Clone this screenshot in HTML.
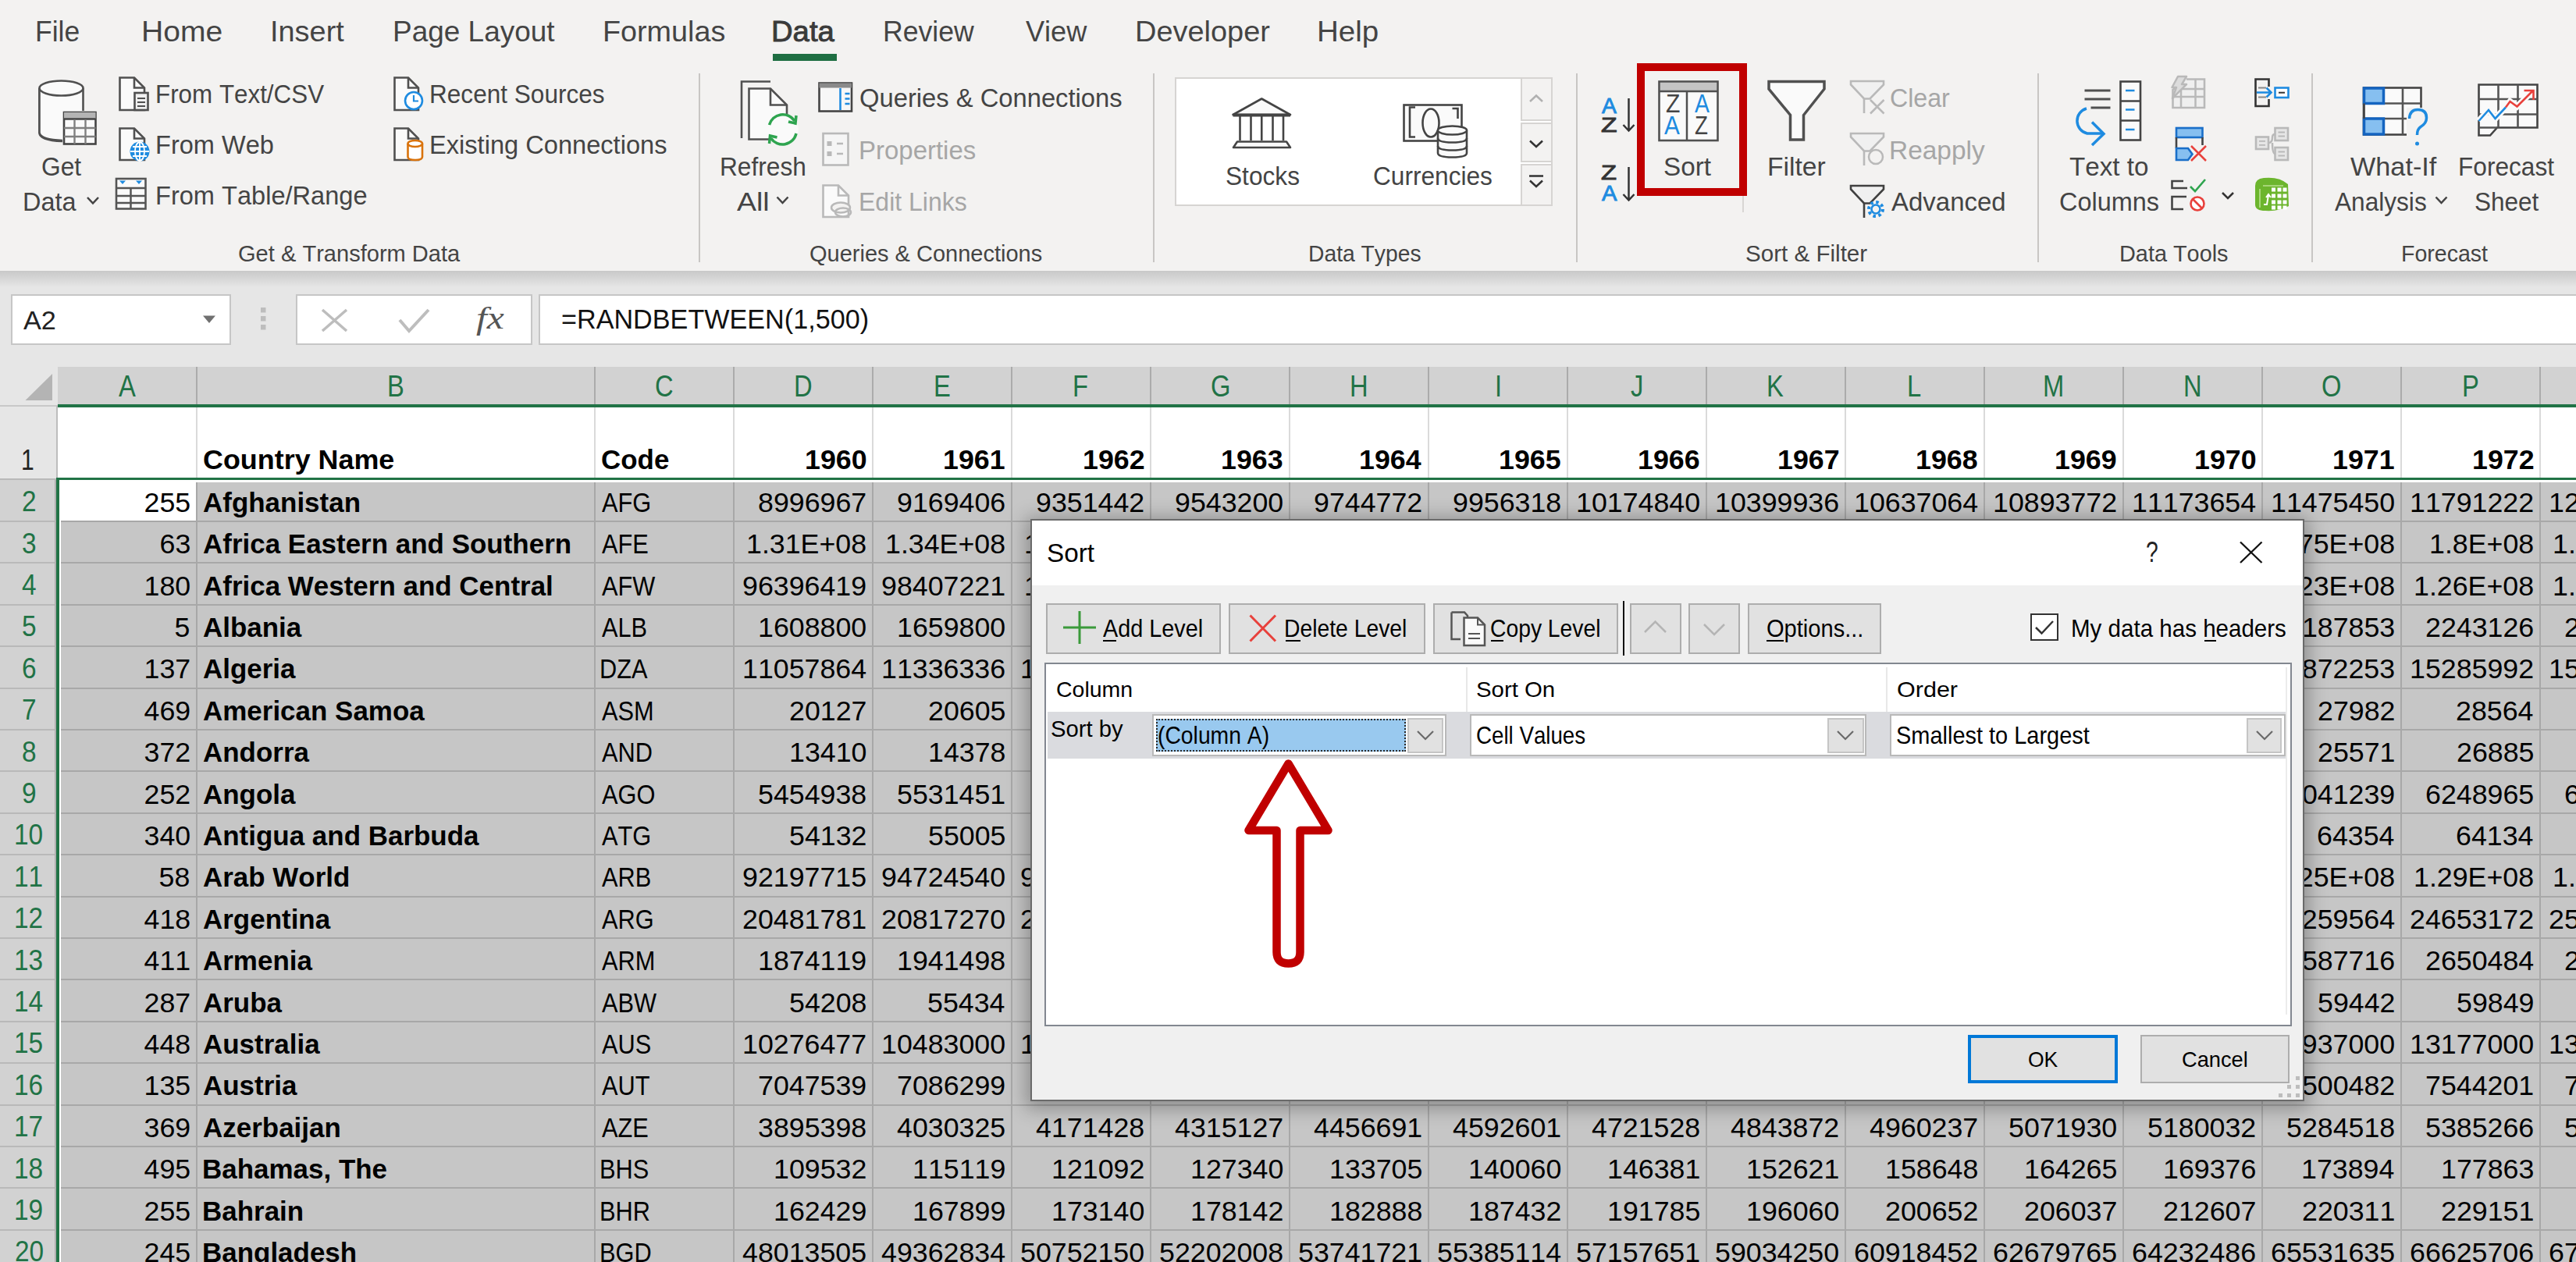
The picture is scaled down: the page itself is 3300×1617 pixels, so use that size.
<!DOCTYPE html>
<html><head><meta charset="utf-8"><style>
html,body{margin:0;padding:0}
body{width:3300px;height:1617px;overflow:hidden;position:relative;background:#fff;font-family:"Liberation Sans",sans-serif;font-kerning:none}
.a{position:absolute}
.t{position:absolute;white-space:pre;transform-origin:0 0}
u{text-decoration:underline;text-underline-offset:3px;text-decoration-thickness:2px}
svg{position:absolute;left:0;top:0}
</style></head><body>
<div class="a" style="left:0.00px;top:0.00px;width:3300.00px;height:347.00px;background:#f3f2f1;"></div>
<div class="a" style="left:0.00px;top:347.00px;width:3300.00px;height:123.00px;background:#e6e6e6;"></div>
<div class="a" style="left:0.00px;top:347.00px;width:3300.00px;height:21.00px;background:linear-gradient(rgba(0,0,0,0.13),rgba(0,0,0,0));"></div>
<div class="a" style="left:14.00px;top:377.00px;width:282.00px;height:65.00px;background:#fff;box-sizing:border-box;border:2px solid #c6c6c6;"></div>
<div class="t" style="left:30.00px;top:393.69px;font-size:33.430px;line-height:33.430px;color:#222;transform:scaleX(1.0256);">A2</div>
<div class="a" style="left:379.00px;top:377.00px;width:303.00px;height:65.00px;background:#fff;box-sizing:border-box;border:2px solid #c6c6c6;"></div>
<div class="a" style="left:690.00px;top:377.00px;width:2620.00px;height:65.00px;background:#fff;box-sizing:border-box;border:2px solid #c6c6c6;"></div>
<svg width="3300" height="470" style="left:0;top:0"><path d="M260 404.5 L276 404.5 L268 414 Z" fill="#707070"/><rect x="334" y="394" width="6.5" height="6.5" fill="#bdbdbd"/><rect x="334" y="405" width="6.5" height="6.5" fill="#bdbdbd"/><rect x="334" y="416" width="6.5" height="6.5" fill="#bdbdbd"/><path d="M413 397 L444 424 M444 397 L413 424" stroke="#bdbdbd" stroke-width="3.5" fill="none"/><path d="M512 410 L524 424 L549 397" stroke="#bdbdbd" stroke-width="4" fill="none"/></svg>
<div class="t" style="left:610.00px;top:388.13px;font-size:40.000px;line-height:40.000px;color:#555;font-family:'Liberation Serif', serif;font-style:italic;transform:scaleX(1.2414);">fx</div>
<div class="t" style="left:719.04px;top:392.46px;font-size:34.884px;line-height:34.884px;color:#111;transform:scaleX(0.9799);">=RANDBETWEEN(1,500)</div>
<div class="a" style="left:0.00px;top:470.00px;width:74.00px;height:50.00px;background:#e6e6e6;"></div>
<svg width="80" height="60" style="left:0;top:470px"><path d="M67 9 L67 43 L32.5 43 Z" fill="#b4b4b4"/></svg>
<div class="a" style="left:74.00px;top:470.00px;width:3226.00px;height:48.00px;background:#d2d2d2;"></div>
<div class="a" style="left:251.00px;top:470.00px;width:2.00px;height:48.00px;background:#ababab;"></div>
<div class="a" style="left:761.00px;top:470.00px;width:2.00px;height:48.00px;background:#ababab;"></div>
<div class="a" style="left:939.00px;top:470.00px;width:2.00px;height:48.00px;background:#ababab;"></div>
<div class="a" style="left:1117.00px;top:470.00px;width:2.00px;height:48.00px;background:#ababab;"></div>
<div class="a" style="left:1295.00px;top:470.00px;width:2.00px;height:48.00px;background:#ababab;"></div>
<div class="a" style="left:1473.00px;top:470.00px;width:2.00px;height:48.00px;background:#ababab;"></div>
<div class="a" style="left:1651.00px;top:470.00px;width:2.00px;height:48.00px;background:#ababab;"></div>
<div class="a" style="left:1829.00px;top:470.00px;width:2.00px;height:48.00px;background:#ababab;"></div>
<div class="a" style="left:2007.00px;top:470.00px;width:2.00px;height:48.00px;background:#ababab;"></div>
<div class="a" style="left:2185.00px;top:470.00px;width:2.00px;height:48.00px;background:#ababab;"></div>
<div class="a" style="left:2363.00px;top:470.00px;width:2.00px;height:48.00px;background:#ababab;"></div>
<div class="a" style="left:2541.00px;top:470.00px;width:2.00px;height:48.00px;background:#ababab;"></div>
<div class="a" style="left:2719.00px;top:470.00px;width:2.00px;height:48.00px;background:#ababab;"></div>
<div class="a" style="left:2897.00px;top:470.00px;width:2.00px;height:48.00px;background:#ababab;"></div>
<div class="a" style="left:3075.00px;top:470.00px;width:2.00px;height:48.00px;background:#ababab;"></div>
<div class="a" style="left:3253.00px;top:470.00px;width:2.00px;height:48.00px;background:#ababab;"></div>
<div class="a" style="left:3431.00px;top:470.00px;width:2.00px;height:48.00px;background:#ababab;"></div>
<div class="a" style="left:0.00px;top:520.00px;width:74.00px;height:92.00px;background:#e6e6e6;"></div>
<div class="a" style="left:74.00px;top:520.00px;width:3226.00px;height:92.00px;background:#fff;"></div>
<div class="a" style="left:0.00px;top:519.00px;width:74.00px;height:2.00px;background:#c8c8c8;"></div>
<div class="a" style="left:72.00px;top:520.00px;width:2.00px;height:92.00px;background:#bdbdbd;"></div>
<div class="a" style="left:251.00px;top:521.00px;width:2.00px;height:91.00px;background:#dadada;"></div>
<div class="a" style="left:761.00px;top:521.00px;width:2.00px;height:91.00px;background:#dadada;"></div>
<div class="a" style="left:939.00px;top:521.00px;width:2.00px;height:91.00px;background:#dadada;"></div>
<div class="a" style="left:1117.00px;top:521.00px;width:2.00px;height:91.00px;background:#dadada;"></div>
<div class="a" style="left:1295.00px;top:521.00px;width:2.00px;height:91.00px;background:#dadada;"></div>
<div class="a" style="left:1473.00px;top:521.00px;width:2.00px;height:91.00px;background:#dadada;"></div>
<div class="a" style="left:1651.00px;top:521.00px;width:2.00px;height:91.00px;background:#dadada;"></div>
<div class="a" style="left:1829.00px;top:521.00px;width:2.00px;height:91.00px;background:#dadada;"></div>
<div class="a" style="left:2007.00px;top:521.00px;width:2.00px;height:91.00px;background:#dadada;"></div>
<div class="a" style="left:2185.00px;top:521.00px;width:2.00px;height:91.00px;background:#dadada;"></div>
<div class="a" style="left:2363.00px;top:521.00px;width:2.00px;height:91.00px;background:#dadada;"></div>
<div class="a" style="left:2541.00px;top:521.00px;width:2.00px;height:91.00px;background:#dadada;"></div>
<div class="a" style="left:2719.00px;top:521.00px;width:2.00px;height:91.00px;background:#dadada;"></div>
<div class="a" style="left:2897.00px;top:521.00px;width:2.00px;height:91.00px;background:#dadada;"></div>
<div class="a" style="left:3075.00px;top:521.00px;width:2.00px;height:91.00px;background:#dadada;"></div>
<div class="a" style="left:3253.00px;top:521.00px;width:2.00px;height:91.00px;background:#dadada;"></div>
<div class="a" style="left:3431.00px;top:521.00px;width:2.00px;height:91.00px;background:#dadada;"></div>
<div class="a" style="left:0.00px;top:612.00px;width:72.00px;height:1.00px;background:#e6e6e6;"></div>
<div class="a" style="left:0.00px;top:613.00px;width:72.00px;height:2.00px;background:#b9b9b9;"></div>
<div class="a" style="left:0.00px;top:615.00px;width:72.00px;height:2685.00px;background:#d2d2d2;"></div>
<div class="a" style="left:0.00px;top:667.00px;width:72.00px;height:2.00px;background:#b9b9b9;"></div>
<div class="a" style="left:0.00px;top:720.40px;width:72.00px;height:2.00px;background:#b9b9b9;"></div>
<div class="a" style="left:0.00px;top:773.80px;width:72.00px;height:2.00px;background:#b9b9b9;"></div>
<div class="a" style="left:0.00px;top:827.20px;width:72.00px;height:2.00px;background:#b9b9b9;"></div>
<div class="a" style="left:0.00px;top:880.60px;width:72.00px;height:2.00px;background:#b9b9b9;"></div>
<div class="a" style="left:0.00px;top:934.00px;width:72.00px;height:2.00px;background:#b9b9b9;"></div>
<div class="a" style="left:0.00px;top:987.40px;width:72.00px;height:2.00px;background:#b9b9b9;"></div>
<div class="a" style="left:0.00px;top:1040.80px;width:72.00px;height:2.00px;background:#b9b9b9;"></div>
<div class="a" style="left:0.00px;top:1094.20px;width:72.00px;height:2.00px;background:#b9b9b9;"></div>
<div class="a" style="left:0.00px;top:1147.60px;width:72.00px;height:2.00px;background:#b9b9b9;"></div>
<div class="a" style="left:0.00px;top:1201.00px;width:72.00px;height:2.00px;background:#b9b9b9;"></div>
<div class="a" style="left:0.00px;top:1254.40px;width:72.00px;height:2.00px;background:#b9b9b9;"></div>
<div class="a" style="left:0.00px;top:1307.80px;width:72.00px;height:2.00px;background:#b9b9b9;"></div>
<div class="a" style="left:0.00px;top:1361.20px;width:72.00px;height:2.00px;background:#b9b9b9;"></div>
<div class="a" style="left:0.00px;top:1414.60px;width:72.00px;height:2.00px;background:#b9b9b9;"></div>
<div class="a" style="left:0.00px;top:1468.00px;width:72.00px;height:2.00px;background:#b9b9b9;"></div>
<div class="a" style="left:0.00px;top:1521.40px;width:72.00px;height:2.00px;background:#b9b9b9;"></div>
<div class="a" style="left:0.00px;top:1574.80px;width:72.00px;height:2.00px;background:#b9b9b9;"></div>
<div class="a" style="left:0.00px;top:1628.20px;width:72.00px;height:2.00px;background:#b9b9b9;"></div>
<div class="a" style="left:70.00px;top:615.00px;width:2.00px;height:2685.00px;background:#b0b0b0;"></div>
<div class="a" style="left:75.00px;top:615.00px;width:3225.00px;height:1002.00px;background:#c6c6c6;"></div>
<div class="a" style="left:75.00px;top:615.00px;width:177.00px;height:53.00px;background:#fff;"></div>
<div class="a" style="left:251.00px;top:615.00px;width:2.00px;height:1002.00px;background:#a8a8a8;"></div>
<div class="a" style="left:761.00px;top:615.00px;width:2.00px;height:1002.00px;background:#a8a8a8;"></div>
<div class="a" style="left:939.00px;top:615.00px;width:2.00px;height:1002.00px;background:#a8a8a8;"></div>
<div class="a" style="left:1117.00px;top:615.00px;width:2.00px;height:1002.00px;background:#a8a8a8;"></div>
<div class="a" style="left:1295.00px;top:615.00px;width:2.00px;height:1002.00px;background:#a8a8a8;"></div>
<div class="a" style="left:1473.00px;top:615.00px;width:2.00px;height:1002.00px;background:#a8a8a8;"></div>
<div class="a" style="left:1651.00px;top:615.00px;width:2.00px;height:1002.00px;background:#a8a8a8;"></div>
<div class="a" style="left:1829.00px;top:615.00px;width:2.00px;height:1002.00px;background:#a8a8a8;"></div>
<div class="a" style="left:2007.00px;top:615.00px;width:2.00px;height:1002.00px;background:#a8a8a8;"></div>
<div class="a" style="left:2185.00px;top:615.00px;width:2.00px;height:1002.00px;background:#a8a8a8;"></div>
<div class="a" style="left:2363.00px;top:615.00px;width:2.00px;height:1002.00px;background:#a8a8a8;"></div>
<div class="a" style="left:2541.00px;top:615.00px;width:2.00px;height:1002.00px;background:#a8a8a8;"></div>
<div class="a" style="left:2719.00px;top:615.00px;width:2.00px;height:1002.00px;background:#a8a8a8;"></div>
<div class="a" style="left:2897.00px;top:615.00px;width:2.00px;height:1002.00px;background:#a8a8a8;"></div>
<div class="a" style="left:3075.00px;top:615.00px;width:2.00px;height:1002.00px;background:#a8a8a8;"></div>
<div class="a" style="left:3253.00px;top:615.00px;width:2.00px;height:1002.00px;background:#a8a8a8;"></div>
<div class="a" style="left:3431.00px;top:615.00px;width:2.00px;height:1002.00px;background:#a8a8a8;"></div>
<div class="a" style="left:78.00px;top:667.00px;width:3222.00px;height:2.00px;background:#a8a8a8;"></div>
<div class="a" style="left:78.00px;top:720.40px;width:3222.00px;height:2.00px;background:#a8a8a8;"></div>
<div class="a" style="left:78.00px;top:773.80px;width:3222.00px;height:2.00px;background:#a8a8a8;"></div>
<div class="a" style="left:78.00px;top:827.20px;width:3222.00px;height:2.00px;background:#a8a8a8;"></div>
<div class="a" style="left:78.00px;top:880.60px;width:3222.00px;height:2.00px;background:#a8a8a8;"></div>
<div class="a" style="left:78.00px;top:934.00px;width:3222.00px;height:2.00px;background:#a8a8a8;"></div>
<div class="a" style="left:78.00px;top:987.40px;width:3222.00px;height:2.00px;background:#a8a8a8;"></div>
<div class="a" style="left:78.00px;top:1040.80px;width:3222.00px;height:2.00px;background:#a8a8a8;"></div>
<div class="a" style="left:78.00px;top:1094.20px;width:3222.00px;height:2.00px;background:#a8a8a8;"></div>
<div class="a" style="left:78.00px;top:1147.60px;width:3222.00px;height:2.00px;background:#a8a8a8;"></div>
<div class="a" style="left:78.00px;top:1201.00px;width:3222.00px;height:2.00px;background:#a8a8a8;"></div>
<div class="a" style="left:78.00px;top:1254.40px;width:3222.00px;height:2.00px;background:#a8a8a8;"></div>
<div class="a" style="left:78.00px;top:1307.80px;width:3222.00px;height:2.00px;background:#a8a8a8;"></div>
<div class="a" style="left:78.00px;top:1361.20px;width:3222.00px;height:2.00px;background:#a8a8a8;"></div>
<div class="a" style="left:78.00px;top:1414.60px;width:3222.00px;height:2.00px;background:#a8a8a8;"></div>
<div class="a" style="left:78.00px;top:1468.00px;width:3222.00px;height:2.00px;background:#a8a8a8;"></div>
<div class="a" style="left:78.00px;top:1521.40px;width:3222.00px;height:2.00px;background:#a8a8a8;"></div>
<div class="a" style="left:78.00px;top:1574.80px;width:3222.00px;height:2.00px;background:#a8a8a8;"></div>
<div class="a" style="left:78.00px;top:1628.20px;width:3222.00px;height:2.00px;background:#a8a8a8;"></div>
<div class="a" style="left:75.00px;top:615.00px;width:3225.00px;height:3.00px;background:#fff;"></div>
<div class="a" style="left:75.00px;top:615.00px;width:3.00px;height:1002.00px;background:#fff;"></div>
<div class="a" style="left:74.00px;top:518.00px;width:3226.00px;height:4.00px;background:#217346;"></div>
<div class="a" style="left:72.00px;top:612.00px;width:3228.00px;height:3.00px;background:#217346;"></div>
<div class="a" style="left:72.00px;top:612.00px;width:3.50px;height:1005.00px;background:#217346;"></div>
<div class="t" style="left:151.95px;top:476.38px;font-size:38.517px;line-height:38.517px;color:#217346;transform:scaleX(0.8500);">A</div>
<div class="t" style="left:495.52px;top:476.38px;font-size:38.517px;line-height:38.517px;color:#217346;transform:scaleX(0.8500);">B</div>
<div class="t" style="left:839.10px;top:476.38px;font-size:38.517px;line-height:38.517px;color:#217346;transform:scaleX(0.8500);">C</div>
<div class="t" style="left:1016.67px;top:476.38px;font-size:38.517px;line-height:38.517px;color:#217346;transform:scaleX(0.8500);">D</div>
<div class="t" style="left:1195.53px;top:476.38px;font-size:38.517px;line-height:38.517px;color:#217346;transform:scaleX(0.8500);">E</div>
<div class="t" style="left:1374.38px;top:476.38px;font-size:38.517px;line-height:38.517px;color:#217346;transform:scaleX(0.8500);">F</div>
<div class="t" style="left:1550.67px;top:476.38px;font-size:38.517px;line-height:38.517px;color:#217346;transform:scaleX(0.8500);">G</div>
<div class="t" style="left:1729.10px;top:476.38px;font-size:38.517px;line-height:38.517px;color:#217346;transform:scaleX(0.8500);">H</div>
<div class="t" style="left:1914.75px;top:476.38px;font-size:38.517px;line-height:38.517px;color:#217346;transform:scaleX(0.8500);">I</div>
<div class="t" style="left:2089.35px;top:476.38px;font-size:38.517px;line-height:38.517px;color:#217346;transform:scaleX(0.8500);">J</div>
<div class="t" style="left:2263.10px;top:476.38px;font-size:38.517px;line-height:38.517px;color:#217346;transform:scaleX(0.8500);">K</div>
<div class="t" style="left:2443.22px;top:476.38px;font-size:38.517px;line-height:38.517px;color:#217346;transform:scaleX(0.8500);">L</div>
<div class="t" style="left:2617.40px;top:476.38px;font-size:38.517px;line-height:38.517px;color:#217346;transform:scaleX(0.8500);">M</div>
<div class="t" style="left:2797.10px;top:476.38px;font-size:38.517px;line-height:38.517px;color:#217346;transform:scaleX(0.8500);">N</div>
<div class="t" style="left:2974.25px;top:476.38px;font-size:38.517px;line-height:38.517px;color:#217346;transform:scaleX(0.8500);">O</div>
<div class="t" style="left:3153.53px;top:476.38px;font-size:38.517px;line-height:38.517px;color:#217346;transform:scaleX(0.8500);">P</div>
<div class="t" style="left:3330.25px;top:476.38px;font-size:38.517px;line-height:38.517px;color:#217346;transform:scaleX(0.8500);">Q</div>
<div class="t" style="left:27.06px;top:571.11px;font-size:37.064px;line-height:37.064px;color:#222;transform:scaleX(0.8125);">1</div>
<div class="t" style="left:27.84px;top:625.23px;font-size:36.337px;line-height:36.337px;color:#217346;transform:scaleX(0.9200);">2</div>
<div class="t" style="left:28.30px;top:678.63px;font-size:36.337px;line-height:36.337px;color:#217346;transform:scaleX(0.9200);">3</div>
<div class="t" style="left:28.30px;top:732.03px;font-size:36.337px;line-height:36.337px;color:#217346;transform:scaleX(0.9200);">4</div>
<div class="t" style="left:28.30px;top:785.43px;font-size:36.337px;line-height:36.337px;color:#217346;transform:scaleX(0.9200);">5</div>
<div class="t" style="left:27.84px;top:838.83px;font-size:36.337px;line-height:36.337px;color:#217346;transform:scaleX(0.9200);">6</div>
<div class="t" style="left:27.84px;top:892.23px;font-size:36.337px;line-height:36.337px;color:#217346;transform:scaleX(0.9200);">7</div>
<div class="t" style="left:27.84px;top:945.63px;font-size:36.337px;line-height:36.337px;color:#217346;transform:scaleX(0.9200);">8</div>
<div class="t" style="left:27.84px;top:999.03px;font-size:36.337px;line-height:36.337px;color:#217346;transform:scaleX(0.9200);">9</div>
<div class="t" style="left:18.18px;top:1052.43px;font-size:36.337px;line-height:36.337px;color:#217346;transform:scaleX(0.9200);">10</div>
<div class="t" style="left:18.18px;top:1105.83px;font-size:36.337px;line-height:36.337px;color:#217346;transform:scaleX(0.9200);">11</div>
<div class="t" style="left:18.18px;top:1159.23px;font-size:36.337px;line-height:36.337px;color:#217346;transform:scaleX(0.9200);">12</div>
<div class="t" style="left:18.18px;top:1212.63px;font-size:36.337px;line-height:36.337px;color:#217346;transform:scaleX(0.9200);">13</div>
<div class="t" style="left:17.72px;top:1266.03px;font-size:36.337px;line-height:36.337px;color:#217346;transform:scaleX(0.9200);">14</div>
<div class="t" style="left:18.18px;top:1319.43px;font-size:36.337px;line-height:36.337px;color:#217346;transform:scaleX(0.9200);">15</div>
<div class="t" style="left:18.18px;top:1372.83px;font-size:36.337px;line-height:36.337px;color:#217346;transform:scaleX(0.9200);">16</div>
<div class="t" style="left:18.18px;top:1426.23px;font-size:36.337px;line-height:36.337px;color:#217346;transform:scaleX(0.9200);">17</div>
<div class="t" style="left:18.18px;top:1479.63px;font-size:36.337px;line-height:36.337px;color:#217346;transform:scaleX(0.9200);">18</div>
<div class="t" style="left:18.18px;top:1533.03px;font-size:36.337px;line-height:36.337px;color:#217346;transform:scaleX(0.9200);">19</div>
<div class="t" style="left:18.64px;top:1586.43px;font-size:36.337px;line-height:36.337px;color:#217346;transform:scaleX(0.9200);">20</div>
<div class="t" style="left:260.00px;top:571.72px;font-size:35.756px;line-height:35.756px;color:#000;font-weight:bold;transform:scaleX(1.0041);">Country Name</div>
<div class="t" style="left:770.02px;top:571.72px;font-size:35.756px;line-height:35.756px;color:#000;font-weight:bold;transform:scaleX(0.9770);">Code</div>
<div class="t" style="left:1031.00px;top:571.72px;font-size:35.756px;line-height:35.756px;color:#000;font-weight:bold;">1960</div>
<div class="t" style="left:1208.00px;top:571.72px;font-size:35.756px;line-height:35.756px;color:#000;font-weight:bold;">1961</div>
<div class="t" style="left:1387.00px;top:571.72px;font-size:35.756px;line-height:35.756px;color:#000;font-weight:bold;">1962</div>
<div class="t" style="left:1564.00px;top:571.72px;font-size:35.756px;line-height:35.756px;color:#000;font-weight:bold;">1963</div>
<div class="t" style="left:1741.00px;top:571.72px;font-size:35.756px;line-height:35.756px;color:#000;font-weight:bold;">1964</div>
<div class="t" style="left:1920.00px;top:571.72px;font-size:35.756px;line-height:35.756px;color:#000;font-weight:bold;">1965</div>
<div class="t" style="left:2098.00px;top:571.72px;font-size:35.756px;line-height:35.756px;color:#000;font-weight:bold;">1966</div>
<div class="t" style="left:2277.00px;top:571.72px;font-size:35.756px;line-height:35.756px;color:#000;font-weight:bold;">1967</div>
<div class="t" style="left:2454.00px;top:571.72px;font-size:35.756px;line-height:35.756px;color:#000;font-weight:bold;">1968</div>
<div class="t" style="left:2632.00px;top:571.72px;font-size:35.756px;line-height:35.756px;color:#000;font-weight:bold;">1969</div>
<div class="t" style="left:2811.00px;top:571.72px;font-size:35.756px;line-height:35.756px;color:#000;font-weight:bold;">1970</div>
<div class="t" style="left:2988.00px;top:571.72px;font-size:35.756px;line-height:35.756px;color:#000;font-weight:bold;">1971</div>
<div class="t" style="left:3167.00px;top:571.72px;font-size:35.756px;line-height:35.756px;color:#000;font-weight:bold;">1972</div>
<div class="t" style="left:184.50px;top:626.72px;font-size:35.756px;line-height:35.756px;color:#000;">255</div>
<div class="t" style="left:260.02px;top:626.72px;font-size:35.756px;line-height:35.756px;color:#000;font-weight:bold;transform:scaleX(0.9780);">Afghanistan</div>
<div class="t" style="left:771.00px;top:626.72px;font-size:35.756px;line-height:35.756px;color:#000;transform:scaleX(0.8600);">AFG</div>
<div class="t" style="left:971.00px;top:626.72px;font-size:35.756px;line-height:35.756px;color:#000;">8996967</div>
<div class="t" style="left:1149.00px;top:626.72px;font-size:35.756px;line-height:35.756px;color:#000;">9169406</div>
<div class="t" style="left:1327.00px;top:626.72px;font-size:35.756px;line-height:35.756px;color:#000;">9351442</div>
<div class="t" style="left:1505.00px;top:626.72px;font-size:35.756px;line-height:35.756px;color:#000;">9543200</div>
<div class="t" style="left:1683.00px;top:626.72px;font-size:35.756px;line-height:35.756px;color:#000;">9744772</div>
<div class="t" style="left:1861.00px;top:626.72px;font-size:35.756px;line-height:35.756px;color:#000;">9956318</div>
<div class="t" style="left:2019.00px;top:626.72px;font-size:35.756px;line-height:35.756px;color:#000;">10174840</div>
<div class="t" style="left:2197.00px;top:626.72px;font-size:35.756px;line-height:35.756px;color:#000;">10399936</div>
<div class="t" style="left:2375.00px;top:626.72px;font-size:35.756px;line-height:35.756px;color:#000;">10637064</div>
<div class="t" style="left:2553.00px;top:626.72px;font-size:35.756px;line-height:35.756px;color:#000;">10893772</div>
<div class="t" style="left:2731.00px;top:626.72px;font-size:35.756px;line-height:35.756px;color:#000;">11173654</div>
<div class="t" style="left:2909.00px;top:626.72px;font-size:35.756px;line-height:35.756px;color:#000;">11475450</div>
<div class="t" style="left:3087.00px;top:626.72px;font-size:35.756px;line-height:35.756px;color:#000;">11791222</div>
<div class="t" style="left:3265.00px;top:626.72px;font-size:35.756px;line-height:35.756px;color:#000;">12127071</div>
<div class="t" style="left:204.50px;top:680.12px;font-size:35.756px;line-height:35.756px;color:#000;">63</div>
<div class="t" style="left:260.02px;top:680.12px;font-size:35.756px;line-height:35.756px;color:#000;font-weight:bold;transform:scaleX(0.9780);">Africa Eastern and Southern</div>
<div class="t" style="left:771.00px;top:680.12px;font-size:35.756px;line-height:35.756px;color:#000;transform:scaleX(0.8600);">AFE</div>
<div class="t" style="left:956.00px;top:680.12px;font-size:35.756px;line-height:35.756px;color:#000;">1.31E+08</div>
<div class="t" style="left:1134.00px;top:680.12px;font-size:35.756px;line-height:35.756px;color:#000;">1.34E+08</div>
<div class="t" style="left:1312.00px;top:680.12px;font-size:35.756px;line-height:35.756px;color:#000;">1.37E+08</div>
<div class="t" style="left:1490.00px;top:680.12px;font-size:35.756px;line-height:35.756px;color:#000;">1.41E+08</div>
<div class="t" style="left:1668.00px;top:680.12px;font-size:35.756px;line-height:35.756px;color:#000;">1.44E+08</div>
<div class="t" style="left:1846.00px;top:680.12px;font-size:35.756px;line-height:35.756px;color:#000;">1.48E+08</div>
<div class="t" style="left:2024.00px;top:680.12px;font-size:35.756px;line-height:35.756px;color:#000;">1.51E+08</div>
<div class="t" style="left:2202.00px;top:680.12px;font-size:35.756px;line-height:35.756px;color:#000;">1.55E+08</div>
<div class="t" style="left:2380.00px;top:680.12px;font-size:35.756px;line-height:35.756px;color:#000;">1.59E+08</div>
<div class="t" style="left:2558.00px;top:680.12px;font-size:35.756px;line-height:35.756px;color:#000;">1.63E+08</div>
<div class="t" style="left:2736.00px;top:680.12px;font-size:35.756px;line-height:35.756px;color:#000;">1.67E+08</div>
<div class="t" style="left:2914.00px;top:680.12px;font-size:35.756px;line-height:35.756px;color:#000;">1.75E+08</div>
<div class="t" style="left:3112.00px;top:680.12px;font-size:35.756px;line-height:35.756px;color:#000;">1.8E+08</div>
<div class="t" style="left:3270.00px;top:680.12px;font-size:35.756px;line-height:35.756px;color:#000;">1.85E+08</div>
<div class="t" style="left:184.50px;top:733.52px;font-size:35.756px;line-height:35.756px;color:#000;">180</div>
<div class="t" style="left:260.02px;top:733.52px;font-size:35.756px;line-height:35.756px;color:#000;font-weight:bold;transform:scaleX(0.9780);">Africa Western and Central</div>
<div class="t" style="left:771.00px;top:733.52px;font-size:35.756px;line-height:35.756px;color:#000;transform:scaleX(0.8600);">AFW</div>
<div class="t" style="left:951.00px;top:733.52px;font-size:35.756px;line-height:35.756px;color:#000;">96396419</div>
<div class="t" style="left:1129.00px;top:733.52px;font-size:35.756px;line-height:35.756px;color:#000;">98407221</div>
<div class="t" style="left:1312.00px;top:733.52px;font-size:35.756px;line-height:35.756px;color:#000;">1.01E+08</div>
<div class="t" style="left:1490.00px;top:733.52px;font-size:35.756px;line-height:35.756px;color:#000;">1.03E+08</div>
<div class="t" style="left:1668.00px;top:733.52px;font-size:35.756px;line-height:35.756px;color:#000;">1.05E+08</div>
<div class="t" style="left:1846.00px;top:733.52px;font-size:35.756px;line-height:35.756px;color:#000;">1.08E+08</div>
<div class="t" style="left:2044.00px;top:733.52px;font-size:35.756px;line-height:35.756px;color:#000;">1.1E+08</div>
<div class="t" style="left:2202.00px;top:733.52px;font-size:35.756px;line-height:35.756px;color:#000;">1.13E+08</div>
<div class="t" style="left:2380.00px;top:733.52px;font-size:35.756px;line-height:35.756px;color:#000;">1.15E+08</div>
<div class="t" style="left:2558.00px;top:733.52px;font-size:35.756px;line-height:35.756px;color:#000;">1.18E+08</div>
<div class="t" style="left:2756.00px;top:733.52px;font-size:35.756px;line-height:35.756px;color:#000;">1.2E+08</div>
<div class="t" style="left:2914.00px;top:733.52px;font-size:35.756px;line-height:35.756px;color:#000;">1.23E+08</div>
<div class="t" style="left:3092.00px;top:733.52px;font-size:35.756px;line-height:35.756px;color:#000;">1.26E+08</div>
<div class="t" style="left:3270.00px;top:733.52px;font-size:35.756px;line-height:35.756px;color:#000;">1.29E+08</div>
<div class="t" style="left:223.50px;top:786.92px;font-size:35.756px;line-height:35.756px;color:#000;">5</div>
<div class="t" style="left:260.02px;top:786.92px;font-size:35.756px;line-height:35.756px;color:#000;font-weight:bold;transform:scaleX(0.9780);">Albania</div>
<div class="t" style="left:771.00px;top:786.92px;font-size:35.756px;line-height:35.756px;color:#000;transform:scaleX(0.8600);">ALB</div>
<div class="t" style="left:971.00px;top:786.92px;font-size:35.756px;line-height:35.756px;color:#000;">1608800</div>
<div class="t" style="left:1149.00px;top:786.92px;font-size:35.756px;line-height:35.756px;color:#000;">1659800</div>
<div class="t" style="left:1327.00px;top:786.92px;font-size:35.756px;line-height:35.756px;color:#000;">1711319</div>
<div class="t" style="left:1505.00px;top:786.92px;font-size:35.756px;line-height:35.756px;color:#000;">1762621</div>
<div class="t" style="left:1683.00px;top:786.92px;font-size:35.756px;line-height:35.756px;color:#000;">1814135</div>
<div class="t" style="left:1861.00px;top:786.92px;font-size:35.756px;line-height:35.756px;color:#000;">1864791</div>
<div class="t" style="left:2039.00px;top:786.92px;font-size:35.756px;line-height:35.756px;color:#000;">1914573</div>
<div class="t" style="left:2217.00px;top:786.92px;font-size:35.756px;line-height:35.756px;color:#000;">1965598</div>
<div class="t" style="left:2395.00px;top:786.92px;font-size:35.756px;line-height:35.756px;color:#000;">2022272</div>
<div class="t" style="left:2573.00px;top:786.92px;font-size:35.756px;line-height:35.756px;color:#000;">2081695</div>
<div class="t" style="left:2751.00px;top:786.92px;font-size:35.756px;line-height:35.756px;color:#000;">2135479</div>
<div class="t" style="left:2929.00px;top:786.92px;font-size:35.756px;line-height:35.756px;color:#000;">2187853</div>
<div class="t" style="left:3107.00px;top:786.92px;font-size:35.756px;line-height:35.756px;color:#000;">2243126</div>
<div class="t" style="left:3285.00px;top:786.92px;font-size:35.756px;line-height:35.756px;color:#000;">2296486</div>
<div class="t" style="left:184.50px;top:840.32px;font-size:35.756px;line-height:35.756px;color:#000;">137</div>
<div class="t" style="left:260.02px;top:840.32px;font-size:35.756px;line-height:35.756px;color:#000;font-weight:bold;transform:scaleX(0.9780);">Algeria</div>
<div class="t" style="left:768.42px;top:840.32px;font-size:35.756px;line-height:35.756px;color:#000;transform:scaleX(0.8600);">DZA</div>
<div class="t" style="left:951.00px;top:840.32px;font-size:35.756px;line-height:35.756px;color:#000;">11057864</div>
<div class="t" style="left:1129.00px;top:840.32px;font-size:35.756px;line-height:35.756px;color:#000;">11336336</div>
<div class="t" style="left:1307.00px;top:840.32px;font-size:35.756px;line-height:35.756px;color:#000;">11619828</div>
<div class="t" style="left:1485.00px;top:840.32px;font-size:35.756px;line-height:35.756px;color:#000;">11912800</div>
<div class="t" style="left:1663.00px;top:840.32px;font-size:35.756px;line-height:35.756px;color:#000;">12221675</div>
<div class="t" style="left:1841.00px;top:840.32px;font-size:35.756px;line-height:35.756px;color:#000;">12550880</div>
<div class="t" style="left:2019.00px;top:840.32px;font-size:35.756px;line-height:35.756px;color:#000;">12902626</div>
<div class="t" style="left:2197.00px;top:840.32px;font-size:35.756px;line-height:35.756px;color:#000;">13275020</div>
<div class="t" style="left:2375.00px;top:840.32px;font-size:35.756px;line-height:35.756px;color:#000;">13663581</div>
<div class="t" style="left:2553.00px;top:840.32px;font-size:35.756px;line-height:35.756px;color:#000;">14061724</div>
<div class="t" style="left:2731.00px;top:840.32px;font-size:35.756px;line-height:35.756px;color:#000;">14464992</div>
<div class="t" style="left:2909.00px;top:840.32px;font-size:35.756px;line-height:35.756px;color:#000;">14872253</div>
<div class="t" style="left:3087.00px;top:840.32px;font-size:35.756px;line-height:35.756px;color:#000;">15285992</div>
<div class="t" style="left:3265.00px;top:840.32px;font-size:35.756px;line-height:35.756px;color:#000;">15711827</div>
<div class="t" style="left:184.50px;top:893.72px;font-size:35.756px;line-height:35.756px;color:#000;">469</div>
<div class="t" style="left:260.02px;top:893.72px;font-size:35.756px;line-height:35.756px;color:#000;font-weight:bold;transform:scaleX(0.9780);">American Samoa</div>
<div class="t" style="left:771.00px;top:893.72px;font-size:35.756px;line-height:35.756px;color:#000;transform:scaleX(0.8600);">ASM</div>
<div class="t" style="left:1011.00px;top:893.72px;font-size:35.756px;line-height:35.756px;color:#000;">20127</div>
<div class="t" style="left:1189.00px;top:893.72px;font-size:35.756px;line-height:35.756px;color:#000;">20605</div>
<div class="t" style="left:1367.00px;top:893.72px;font-size:35.756px;line-height:35.756px;color:#000;">21246</div>
<div class="t" style="left:1545.00px;top:893.72px;font-size:35.756px;line-height:35.756px;color:#000;">22029</div>
<div class="t" style="left:1723.00px;top:893.72px;font-size:35.756px;line-height:35.756px;color:#000;">22850</div>
<div class="t" style="left:1901.00px;top:893.72px;font-size:35.756px;line-height:35.756px;color:#000;">23675</div>
<div class="t" style="left:2079.00px;top:893.72px;font-size:35.756px;line-height:35.756px;color:#000;">24473</div>
<div class="t" style="left:2257.00px;top:893.72px;font-size:35.756px;line-height:35.756px;color:#000;">25235</div>
<div class="t" style="left:2435.00px;top:893.72px;font-size:35.756px;line-height:35.756px;color:#000;">25980</div>
<div class="t" style="left:2613.00px;top:893.72px;font-size:35.756px;line-height:35.756px;color:#000;">26698</div>
<div class="t" style="left:2791.00px;top:893.72px;font-size:35.756px;line-height:35.756px;color:#000;">27362</div>
<div class="t" style="left:2969.00px;top:893.72px;font-size:35.756px;line-height:35.756px;color:#000;">27982</div>
<div class="t" style="left:3146.00px;top:893.72px;font-size:35.756px;line-height:35.756px;color:#000;">28564</div>
<div class="t" style="left:3325.00px;top:893.72px;font-size:35.756px;line-height:35.756px;color:#000;">29150</div>
<div class="t" style="left:184.50px;top:947.12px;font-size:35.756px;line-height:35.756px;color:#000;">372</div>
<div class="t" style="left:260.02px;top:947.12px;font-size:35.756px;line-height:35.756px;color:#000;font-weight:bold;transform:scaleX(0.9780);">Andorra</div>
<div class="t" style="left:771.00px;top:947.12px;font-size:35.756px;line-height:35.756px;color:#000;transform:scaleX(0.8600);">AND</div>
<div class="t" style="left:1011.00px;top:947.12px;font-size:35.756px;line-height:35.756px;color:#000;">13410</div>
<div class="t" style="left:1189.00px;top:947.12px;font-size:35.756px;line-height:35.756px;color:#000;">14378</div>
<div class="t" style="left:1367.00px;top:947.12px;font-size:35.756px;line-height:35.756px;color:#000;">15379</div>
<div class="t" style="left:1545.00px;top:947.12px;font-size:35.756px;line-height:35.756px;color:#000;">16407</div>
<div class="t" style="left:1723.00px;top:947.12px;font-size:35.756px;line-height:35.756px;color:#000;">17466</div>
<div class="t" style="left:1901.00px;top:947.12px;font-size:35.756px;line-height:35.756px;color:#000;">18542</div>
<div class="t" style="left:2079.00px;top:947.12px;font-size:35.756px;line-height:35.756px;color:#000;">19646</div>
<div class="t" style="left:2257.00px;top:947.12px;font-size:35.756px;line-height:35.756px;color:#000;">20760</div>
<div class="t" style="left:2435.00px;top:947.12px;font-size:35.756px;line-height:35.756px;color:#000;">21886</div>
<div class="t" style="left:2613.00px;top:947.12px;font-size:35.756px;line-height:35.756px;color:#000;">23061</div>
<div class="t" style="left:2791.00px;top:947.12px;font-size:35.756px;line-height:35.756px;color:#000;">24279</div>
<div class="t" style="left:2969.00px;top:947.12px;font-size:35.756px;line-height:35.756px;color:#000;">25571</div>
<div class="t" style="left:3147.00px;top:947.12px;font-size:35.756px;line-height:35.756px;color:#000;">26885</div>
<div class="t" style="left:3325.00px;top:947.12px;font-size:35.756px;line-height:35.756px;color:#000;">28180</div>
<div class="t" style="left:184.50px;top:1000.52px;font-size:35.756px;line-height:35.756px;color:#000;">252</div>
<div class="t" style="left:260.02px;top:1000.52px;font-size:35.756px;line-height:35.756px;color:#000;font-weight:bold;transform:scaleX(0.9780);">Angola</div>
<div class="t" style="left:771.00px;top:1000.52px;font-size:35.756px;line-height:35.756px;color:#000;transform:scaleX(0.8600);">AGO</div>
<div class="t" style="left:971.00px;top:1000.52px;font-size:35.756px;line-height:35.756px;color:#000;">5454938</div>
<div class="t" style="left:1149.00px;top:1000.52px;font-size:35.756px;line-height:35.756px;color:#000;">5531451</div>
<div class="t" style="left:1327.00px;top:1000.52px;font-size:35.756px;line-height:35.756px;color:#000;">5608499</div>
<div class="t" style="left:1505.00px;top:1000.52px;font-size:35.756px;line-height:35.756px;color:#000;">5679409</div>
<div class="t" style="left:1683.00px;top:1000.52px;font-size:35.756px;line-height:35.756px;color:#000;">5734995</div>
<div class="t" style="left:1861.00px;top:1000.52px;font-size:35.756px;line-height:35.756px;color:#000;">5770573</div>
<div class="t" style="left:2039.00px;top:1000.52px;font-size:35.756px;line-height:35.756px;color:#000;">5781305</div>
<div class="t" style="left:2217.00px;top:1000.52px;font-size:35.756px;line-height:35.756px;color:#000;">5774440</div>
<div class="t" style="left:2395.00px;top:1000.52px;font-size:35.756px;line-height:35.756px;color:#000;">5771973</div>
<div class="t" style="left:2573.00px;top:1000.52px;font-size:35.756px;line-height:35.756px;color:#000;">5803677</div>
<div class="t" style="left:2751.00px;top:1000.52px;font-size:35.756px;line-height:35.756px;color:#000;">5890360</div>
<div class="t" style="left:2929.00px;top:1000.52px;font-size:35.756px;line-height:35.756px;color:#000;">6041239</div>
<div class="t" style="left:3107.00px;top:1000.52px;font-size:35.756px;line-height:35.756px;color:#000;">6248965</div>
<div class="t" style="left:3285.00px;top:1000.52px;font-size:35.756px;line-height:35.756px;color:#000;">6497283</div>
<div class="t" style="left:184.50px;top:1053.92px;font-size:35.756px;line-height:35.756px;color:#000;">340</div>
<div class="t" style="left:260.02px;top:1053.92px;font-size:35.756px;line-height:35.756px;color:#000;font-weight:bold;transform:scaleX(0.9780);">Antigua and Barbuda</div>
<div class="t" style="left:771.00px;top:1053.92px;font-size:35.756px;line-height:35.756px;color:#000;transform:scaleX(0.8600);">ATG</div>
<div class="t" style="left:1011.00px;top:1053.92px;font-size:35.756px;line-height:35.756px;color:#000;">54132</div>
<div class="t" style="left:1189.00px;top:1053.92px;font-size:35.756px;line-height:35.756px;color:#000;">55005</div>
<div class="t" style="left:1367.00px;top:1053.92px;font-size:35.756px;line-height:35.756px;color:#000;">55849</div>
<div class="t" style="left:1545.00px;top:1053.92px;font-size:35.756px;line-height:35.756px;color:#000;">56701</div>
<div class="t" style="left:1723.00px;top:1053.92px;font-size:35.756px;line-height:35.756px;color:#000;">57641</div>
<div class="t" style="left:1901.00px;top:1053.92px;font-size:35.756px;line-height:35.756px;color:#000;">58699</div>
<div class="t" style="left:2079.00px;top:1053.92px;font-size:35.756px;line-height:35.756px;color:#000;">59912</div>
<div class="t" style="left:2257.00px;top:1053.92px;font-size:35.756px;line-height:35.756px;color:#000;">61240</div>
<div class="t" style="left:2435.00px;top:1053.92px;font-size:35.756px;line-height:35.756px;color:#000;">62523</div>
<div class="t" style="left:2613.00px;top:1053.92px;font-size:35.756px;line-height:35.756px;color:#000;">63553</div>
<div class="t" style="left:2790.00px;top:1053.92px;font-size:35.756px;line-height:35.756px;color:#000;">64184</div>
<div class="t" style="left:2968.00px;top:1053.92px;font-size:35.756px;line-height:35.756px;color:#000;">64354</div>
<div class="t" style="left:3146.00px;top:1053.92px;font-size:35.756px;line-height:35.756px;color:#000;">64134</div>
<div class="t" style="left:3324.00px;top:1053.92px;font-size:35.756px;line-height:35.756px;color:#000;">63804</div>
<div class="t" style="left:203.50px;top:1107.32px;font-size:35.756px;line-height:35.756px;color:#000;">58</div>
<div class="t" style="left:260.02px;top:1107.32px;font-size:35.756px;line-height:35.756px;color:#000;font-weight:bold;transform:scaleX(0.9780);">Arab World</div>
<div class="t" style="left:771.00px;top:1107.32px;font-size:35.756px;line-height:35.756px;color:#000;transform:scaleX(0.8600);">ARB</div>
<div class="t" style="left:951.00px;top:1107.32px;font-size:35.756px;line-height:35.756px;color:#000;">92197715</div>
<div class="t" style="left:1129.00px;top:1107.32px;font-size:35.756px;line-height:35.756px;color:#000;">94724540</div>
<div class="t" style="left:1307.00px;top:1107.32px;font-size:35.756px;line-height:35.756px;color:#000;">97334438</div>
<div class="t" style="left:1540.00px;top:1107.32px;font-size:35.756px;line-height:35.756px;color:#000;">1E+08</div>
<div class="t" style="left:1668.00px;top:1107.32px;font-size:35.756px;line-height:35.756px;color:#000;">1.03E+08</div>
<div class="t" style="left:1846.00px;top:1107.32px;font-size:35.756px;line-height:35.756px;color:#000;">1.06E+08</div>
<div class="t" style="left:2024.00px;top:1107.32px;font-size:35.756px;line-height:35.756px;color:#000;">1.09E+08</div>
<div class="t" style="left:2202.00px;top:1107.32px;font-size:35.756px;line-height:35.756px;color:#000;">1.12E+08</div>
<div class="t" style="left:2380.00px;top:1107.32px;font-size:35.756px;line-height:35.756px;color:#000;">1.15E+08</div>
<div class="t" style="left:2558.00px;top:1107.32px;font-size:35.756px;line-height:35.756px;color:#000;">1.18E+08</div>
<div class="t" style="left:2736.00px;top:1107.32px;font-size:35.756px;line-height:35.756px;color:#000;">1.22E+08</div>
<div class="t" style="left:2914.00px;top:1107.32px;font-size:35.756px;line-height:35.756px;color:#000;">1.25E+08</div>
<div class="t" style="left:3092.00px;top:1107.32px;font-size:35.756px;line-height:35.756px;color:#000;">1.29E+08</div>
<div class="t" style="left:3270.00px;top:1107.32px;font-size:35.756px;line-height:35.756px;color:#000;">1.33E+08</div>
<div class="t" style="left:184.50px;top:1160.72px;font-size:35.756px;line-height:35.756px;color:#000;">418</div>
<div class="t" style="left:260.02px;top:1160.72px;font-size:35.756px;line-height:35.756px;color:#000;font-weight:bold;transform:scaleX(0.9780);">Argentina</div>
<div class="t" style="left:771.00px;top:1160.72px;font-size:35.756px;line-height:35.756px;color:#000;transform:scaleX(0.8600);">ARG</div>
<div class="t" style="left:951.00px;top:1160.72px;font-size:35.756px;line-height:35.756px;color:#000;">20481781</div>
<div class="t" style="left:1129.00px;top:1160.72px;font-size:35.756px;line-height:35.756px;color:#000;">20817270</div>
<div class="t" style="left:1307.00px;top:1160.72px;font-size:35.756px;line-height:35.756px;color:#000;">21153042</div>
<div class="t" style="left:1485.00px;top:1160.72px;font-size:35.756px;line-height:35.756px;color:#000;">21488916</div>
<div class="t" style="left:1663.00px;top:1160.72px;font-size:35.756px;line-height:35.756px;color:#000;">21824427</div>
<div class="t" style="left:1841.00px;top:1160.72px;font-size:35.756px;line-height:35.756px;color:#000;">22159644</div>
<div class="t" style="left:2019.00px;top:1160.72px;font-size:35.756px;line-height:35.756px;color:#000;">22494031</div>
<div class="t" style="left:2197.00px;top:1160.72px;font-size:35.756px;line-height:35.756px;color:#000;">22828872</div>
<div class="t" style="left:2375.00px;top:1160.72px;font-size:35.756px;line-height:35.756px;color:#000;">23168268</div>
<div class="t" style="left:2553.00px;top:1160.72px;font-size:35.756px;line-height:35.756px;color:#000;">23517613</div>
<div class="t" style="left:2731.00px;top:1160.72px;font-size:35.756px;line-height:35.756px;color:#000;">23880564</div>
<div class="t" style="left:2909.00px;top:1160.72px;font-size:35.756px;line-height:35.756px;color:#000;">24259564</div>
<div class="t" style="left:3087.00px;top:1160.72px;font-size:35.756px;line-height:35.756px;color:#000;">24653172</div>
<div class="t" style="left:3265.00px;top:1160.72px;font-size:35.756px;line-height:35.756px;color:#000;">25056706</div>
<div class="t" style="left:184.50px;top:1214.12px;font-size:35.756px;line-height:35.756px;color:#000;">411</div>
<div class="t" style="left:260.02px;top:1214.12px;font-size:35.756px;line-height:35.756px;color:#000;font-weight:bold;transform:scaleX(0.9780);">Armenia</div>
<div class="t" style="left:771.00px;top:1214.12px;font-size:35.756px;line-height:35.756px;color:#000;transform:scaleX(0.8600);">ARM</div>
<div class="t" style="left:971.00px;top:1214.12px;font-size:35.756px;line-height:35.756px;color:#000;">1874119</div>
<div class="t" style="left:1149.00px;top:1214.12px;font-size:35.756px;line-height:35.756px;color:#000;">1941498</div>
<div class="t" style="left:1327.00px;top:1214.12px;font-size:35.756px;line-height:35.756px;color:#000;">2009524</div>
<div class="t" style="left:1505.00px;top:1214.12px;font-size:35.756px;line-height:35.756px;color:#000;">2077584</div>
<div class="t" style="left:1683.00px;top:1214.12px;font-size:35.756px;line-height:35.756px;color:#000;">2145004</div>
<div class="t" style="left:1861.00px;top:1214.12px;font-size:35.756px;line-height:35.756px;color:#000;">2211316</div>
<div class="t" style="left:2039.00px;top:1214.12px;font-size:35.756px;line-height:35.756px;color:#000;">2276038</div>
<div class="t" style="left:2217.00px;top:1214.12px;font-size:35.756px;line-height:35.756px;color:#000;">2339133</div>
<div class="t" style="left:2395.00px;top:1214.12px;font-size:35.756px;line-height:35.756px;color:#000;">2401142</div>
<div class="t" style="left:2573.00px;top:1214.12px;font-size:35.756px;line-height:35.756px;color:#000;">2462938</div>
<div class="t" style="left:2751.00px;top:1214.12px;font-size:35.756px;line-height:35.756px;color:#000;">2525067</div>
<div class="t" style="left:2929.00px;top:1214.12px;font-size:35.756px;line-height:35.756px;color:#000;">2587716</div>
<div class="t" style="left:3107.00px;top:1214.12px;font-size:35.756px;line-height:35.756px;color:#000;">2650484</div>
<div class="t" style="left:3285.00px;top:1214.12px;font-size:35.756px;line-height:35.756px;color:#000;">2712944</div>
<div class="t" style="left:184.50px;top:1267.52px;font-size:35.756px;line-height:35.756px;color:#000;">287</div>
<div class="t" style="left:260.02px;top:1267.52px;font-size:35.756px;line-height:35.756px;color:#000;font-weight:bold;transform:scaleX(0.9780);">Aruba</div>
<div class="t" style="left:771.00px;top:1267.52px;font-size:35.756px;line-height:35.756px;color:#000;transform:scaleX(0.8600);">ABW</div>
<div class="t" style="left:1011.00px;top:1267.52px;font-size:35.756px;line-height:35.756px;color:#000;">54208</div>
<div class="t" style="left:1188.00px;top:1267.52px;font-size:35.756px;line-height:35.756px;color:#000;">55434</div>
<div class="t" style="left:1366.00px;top:1267.52px;font-size:35.756px;line-height:35.756px;color:#000;">56234</div>
<div class="t" style="left:1545.00px;top:1267.52px;font-size:35.756px;line-height:35.756px;color:#000;">56699</div>
<div class="t" style="left:1723.00px;top:1267.52px;font-size:35.756px;line-height:35.756px;color:#000;">57029</div>
<div class="t" style="left:1901.00px;top:1267.52px;font-size:35.756px;line-height:35.756px;color:#000;">57357</div>
<div class="t" style="left:2079.00px;top:1267.52px;font-size:35.756px;line-height:35.756px;color:#000;">57702</div>
<div class="t" style="left:2256.00px;top:1267.52px;font-size:35.756px;line-height:35.756px;color:#000;">58044</div>
<div class="t" style="left:2435.00px;top:1267.52px;font-size:35.756px;line-height:35.756px;color:#000;">58377</div>
<div class="t" style="left:2612.00px;top:1267.52px;font-size:35.756px;line-height:35.756px;color:#000;">58734</div>
<div class="t" style="left:2791.00px;top:1267.52px;font-size:35.756px;line-height:35.756px;color:#000;">59070</div>
<div class="t" style="left:2969.00px;top:1267.52px;font-size:35.756px;line-height:35.756px;color:#000;">59442</div>
<div class="t" style="left:3147.00px;top:1267.52px;font-size:35.756px;line-height:35.756px;color:#000;">59849</div>
<div class="t" style="left:3325.00px;top:1267.52px;font-size:35.756px;line-height:35.756px;color:#000;">60236</div>
<div class="t" style="left:184.50px;top:1320.92px;font-size:35.756px;line-height:35.756px;color:#000;">448</div>
<div class="t" style="left:260.02px;top:1320.92px;font-size:35.756px;line-height:35.756px;color:#000;font-weight:bold;transform:scaleX(0.9780);">Australia</div>
<div class="t" style="left:771.00px;top:1320.92px;font-size:35.756px;line-height:35.756px;color:#000;transform:scaleX(0.8600);">AUS</div>
<div class="t" style="left:951.00px;top:1320.92px;font-size:35.756px;line-height:35.756px;color:#000;">10276477</div>
<div class="t" style="left:1129.00px;top:1320.92px;font-size:35.756px;line-height:35.756px;color:#000;">10483000</div>
<div class="t" style="left:1307.00px;top:1320.92px;font-size:35.756px;line-height:35.756px;color:#000;">10742000</div>
<div class="t" style="left:1485.00px;top:1320.92px;font-size:35.756px;line-height:35.756px;color:#000;">10950000</div>
<div class="t" style="left:1663.00px;top:1320.92px;font-size:35.756px;line-height:35.756px;color:#000;">11167000</div>
<div class="t" style="left:1841.00px;top:1320.92px;font-size:35.756px;line-height:35.756px;color:#000;">11388000</div>
<div class="t" style="left:2019.00px;top:1320.92px;font-size:35.756px;line-height:35.756px;color:#000;">11651000</div>
<div class="t" style="left:2197.00px;top:1320.92px;font-size:35.756px;line-height:35.756px;color:#000;">11799000</div>
<div class="t" style="left:2375.00px;top:1320.92px;font-size:35.756px;line-height:35.756px;color:#000;">12009000</div>
<div class="t" style="left:2553.00px;top:1320.92px;font-size:35.756px;line-height:35.756px;color:#000;">12263000</div>
<div class="t" style="left:2731.00px;top:1320.92px;font-size:35.756px;line-height:35.756px;color:#000;">12507000</div>
<div class="t" style="left:2909.00px;top:1320.92px;font-size:35.756px;line-height:35.756px;color:#000;">12937000</div>
<div class="t" style="left:3087.00px;top:1320.92px;font-size:35.756px;line-height:35.756px;color:#000;">13177000</div>
<div class="t" style="left:3265.00px;top:1320.92px;font-size:35.756px;line-height:35.756px;color:#000;">13380000</div>
<div class="t" style="left:184.50px;top:1374.32px;font-size:35.756px;line-height:35.756px;color:#000;">135</div>
<div class="t" style="left:260.02px;top:1374.32px;font-size:35.756px;line-height:35.756px;color:#000;font-weight:bold;transform:scaleX(0.9780);">Austria</div>
<div class="t" style="left:771.00px;top:1374.32px;font-size:35.756px;line-height:35.756px;color:#000;transform:scaleX(0.8600);">AUT</div>
<div class="t" style="left:971.00px;top:1374.32px;font-size:35.756px;line-height:35.756px;color:#000;">7047539</div>
<div class="t" style="left:1149.00px;top:1374.32px;font-size:35.756px;line-height:35.756px;color:#000;">7086299</div>
<div class="t" style="left:1327.00px;top:1374.32px;font-size:35.756px;line-height:35.756px;color:#000;">7129864</div>
<div class="t" style="left:1505.00px;top:1374.32px;font-size:35.756px;line-height:35.756px;color:#000;">7175811</div>
<div class="t" style="left:1683.00px;top:1374.32px;font-size:35.756px;line-height:35.756px;color:#000;">7223801</div>
<div class="t" style="left:1861.00px;top:1374.32px;font-size:35.756px;line-height:35.756px;color:#000;">7270889</div>
<div class="t" style="left:2039.00px;top:1374.32px;font-size:35.756px;line-height:35.756px;color:#000;">7322066</div>
<div class="t" style="left:2217.00px;top:1374.32px;font-size:35.756px;line-height:35.756px;color:#000;">7376998</div>
<div class="t" style="left:2395.00px;top:1374.32px;font-size:35.756px;line-height:35.756px;color:#000;">7415403</div>
<div class="t" style="left:2573.00px;top:1374.32px;font-size:35.756px;line-height:35.756px;color:#000;">7441055</div>
<div class="t" style="left:2751.00px;top:1374.32px;font-size:35.756px;line-height:35.756px;color:#000;">7467086</div>
<div class="t" style="left:2929.00px;top:1374.32px;font-size:35.756px;line-height:35.756px;color:#000;">7500482</div>
<div class="t" style="left:3107.00px;top:1374.32px;font-size:35.756px;line-height:35.756px;color:#000;">7544201</div>
<div class="t" style="left:3285.00px;top:1374.32px;font-size:35.756px;line-height:35.756px;color:#000;">7586115</div>
<div class="t" style="left:184.50px;top:1427.72px;font-size:35.756px;line-height:35.756px;color:#000;">369</div>
<div class="t" style="left:260.02px;top:1427.72px;font-size:35.756px;line-height:35.756px;color:#000;font-weight:bold;transform:scaleX(0.9780);">Azerbaijan</div>
<div class="t" style="left:771.00px;top:1427.72px;font-size:35.756px;line-height:35.756px;color:#000;transform:scaleX(0.8600);">AZE</div>
<div class="t" style="left:971.00px;top:1427.72px;font-size:35.756px;line-height:35.756px;color:#000;">3895398</div>
<div class="t" style="left:1149.00px;top:1427.72px;font-size:35.756px;line-height:35.756px;color:#000;">4030325</div>
<div class="t" style="left:1327.00px;top:1427.72px;font-size:35.756px;line-height:35.756px;color:#000;">4171428</div>
<div class="t" style="left:1505.00px;top:1427.72px;font-size:35.756px;line-height:35.756px;color:#000;">4315127</div>
<div class="t" style="left:1683.00px;top:1427.72px;font-size:35.756px;line-height:35.756px;color:#000;">4456691</div>
<div class="t" style="left:1861.00px;top:1427.72px;font-size:35.756px;line-height:35.756px;color:#000;">4592601</div>
<div class="t" style="left:2039.00px;top:1427.72px;font-size:35.756px;line-height:35.756px;color:#000;">4721528</div>
<div class="t" style="left:2217.00px;top:1427.72px;font-size:35.756px;line-height:35.756px;color:#000;">4843872</div>
<div class="t" style="left:2395.00px;top:1427.72px;font-size:35.756px;line-height:35.756px;color:#000;">4960237</div>
<div class="t" style="left:2573.00px;top:1427.72px;font-size:35.756px;line-height:35.756px;color:#000;">5071930</div>
<div class="t" style="left:2751.00px;top:1427.72px;font-size:35.756px;line-height:35.756px;color:#000;">5180032</div>
<div class="t" style="left:2929.00px;top:1427.72px;font-size:35.756px;line-height:35.756px;color:#000;">5284518</div>
<div class="t" style="left:3107.00px;top:1427.72px;font-size:35.756px;line-height:35.756px;color:#000;">5385266</div>
<div class="t" style="left:3285.00px;top:1427.72px;font-size:35.756px;line-height:35.756px;color:#000;">5483540</div>
<div class="t" style="left:184.50px;top:1481.12px;font-size:35.756px;line-height:35.756px;color:#000;">495</div>
<div class="t" style="left:259.04px;top:1481.12px;font-size:35.756px;line-height:35.756px;color:#000;font-weight:bold;transform:scaleX(0.9780);">Bahamas, The</div>
<div class="t" style="left:768.42px;top:1481.12px;font-size:35.756px;line-height:35.756px;color:#000;transform:scaleX(0.8600);">BHS</div>
<div class="t" style="left:991.00px;top:1481.12px;font-size:35.756px;line-height:35.756px;color:#000;">109532</div>
<div class="t" style="left:1169.00px;top:1481.12px;font-size:35.756px;line-height:35.756px;color:#000;">115119</div>
<div class="t" style="left:1347.00px;top:1481.12px;font-size:35.756px;line-height:35.756px;color:#000;">121092</div>
<div class="t" style="left:1525.00px;top:1481.12px;font-size:35.756px;line-height:35.756px;color:#000;">127340</div>
<div class="t" style="left:1703.00px;top:1481.12px;font-size:35.756px;line-height:35.756px;color:#000;">133705</div>
<div class="t" style="left:1881.00px;top:1481.12px;font-size:35.756px;line-height:35.756px;color:#000;">140060</div>
<div class="t" style="left:2059.00px;top:1481.12px;font-size:35.756px;line-height:35.756px;color:#000;">146381</div>
<div class="t" style="left:2237.00px;top:1481.12px;font-size:35.756px;line-height:35.756px;color:#000;">152621</div>
<div class="t" style="left:2415.00px;top:1481.12px;font-size:35.756px;line-height:35.756px;color:#000;">158648</div>
<div class="t" style="left:2593.00px;top:1481.12px;font-size:35.756px;line-height:35.756px;color:#000;">164265</div>
<div class="t" style="left:2771.00px;top:1481.12px;font-size:35.756px;line-height:35.756px;color:#000;">169376</div>
<div class="t" style="left:2948.00px;top:1481.12px;font-size:35.756px;line-height:35.756px;color:#000;">173894</div>
<div class="t" style="left:3127.00px;top:1481.12px;font-size:35.756px;line-height:35.756px;color:#000;">177863</div>
<div class="t" style="left:3305.00px;top:1481.12px;font-size:35.756px;line-height:35.756px;color:#000;">181826</div>
<div class="t" style="left:184.50px;top:1534.52px;font-size:35.756px;line-height:35.756px;color:#000;">255</div>
<div class="t" style="left:259.04px;top:1534.52px;font-size:35.756px;line-height:35.756px;color:#000;font-weight:bold;transform:scaleX(0.9780);">Bahrain</div>
<div class="t" style="left:768.42px;top:1534.52px;font-size:35.756px;line-height:35.756px;color:#000;transform:scaleX(0.8600);">BHR</div>
<div class="t" style="left:991.00px;top:1534.52px;font-size:35.756px;line-height:35.756px;color:#000;">162429</div>
<div class="t" style="left:1169.00px;top:1534.52px;font-size:35.756px;line-height:35.756px;color:#000;">167899</div>
<div class="t" style="left:1347.00px;top:1534.52px;font-size:35.756px;line-height:35.756px;color:#000;">173140</div>
<div class="t" style="left:1525.00px;top:1534.52px;font-size:35.756px;line-height:35.756px;color:#000;">178142</div>
<div class="t" style="left:1703.00px;top:1534.52px;font-size:35.756px;line-height:35.756px;color:#000;">182888</div>
<div class="t" style="left:1881.00px;top:1534.52px;font-size:35.756px;line-height:35.756px;color:#000;">187432</div>
<div class="t" style="left:2059.00px;top:1534.52px;font-size:35.756px;line-height:35.756px;color:#000;">191785</div>
<div class="t" style="left:2237.00px;top:1534.52px;font-size:35.756px;line-height:35.756px;color:#000;">196060</div>
<div class="t" style="left:2415.00px;top:1534.52px;font-size:35.756px;line-height:35.756px;color:#000;">200652</div>
<div class="t" style="left:2593.00px;top:1534.52px;font-size:35.756px;line-height:35.756px;color:#000;">206037</div>
<div class="t" style="left:2771.00px;top:1534.52px;font-size:35.756px;line-height:35.756px;color:#000;">212607</div>
<div class="t" style="left:2949.00px;top:1534.52px;font-size:35.756px;line-height:35.756px;color:#000;">220311</div>
<div class="t" style="left:3127.00px;top:1534.52px;font-size:35.756px;line-height:35.756px;color:#000;">229151</div>
<div class="t" style="left:3305.00px;top:1534.52px;font-size:35.756px;line-height:35.756px;color:#000;">238960</div>
<div class="t" style="left:184.50px;top:1587.92px;font-size:35.756px;line-height:35.756px;color:#000;">245</div>
<div class="t" style="left:259.04px;top:1587.92px;font-size:35.756px;line-height:35.756px;color:#000;font-weight:bold;transform:scaleX(0.9780);">Bangladesh</div>
<div class="t" style="left:768.42px;top:1587.92px;font-size:35.756px;line-height:35.756px;color:#000;transform:scaleX(0.8600);">BGD</div>
<div class="t" style="left:951.00px;top:1587.92px;font-size:35.756px;line-height:35.756px;color:#000;">48013505</div>
<div class="t" style="left:1129.00px;top:1587.92px;font-size:35.756px;line-height:35.756px;color:#000;">49362834</div>
<div class="t" style="left:1307.00px;top:1587.92px;font-size:35.756px;line-height:35.756px;color:#000;">50752150</div>
<div class="t" style="left:1485.00px;top:1587.92px;font-size:35.756px;line-height:35.756px;color:#000;">52202008</div>
<div class="t" style="left:1663.00px;top:1587.92px;font-size:35.756px;line-height:35.756px;color:#000;">53741721</div>
<div class="t" style="left:1841.00px;top:1587.92px;font-size:35.756px;line-height:35.756px;color:#000;">55385114</div>
<div class="t" style="left:2019.00px;top:1587.92px;font-size:35.756px;line-height:35.756px;color:#000;">57157651</div>
<div class="t" style="left:2197.00px;top:1587.92px;font-size:35.756px;line-height:35.756px;color:#000;">59034250</div>
<div class="t" style="left:2375.00px;top:1587.92px;font-size:35.756px;line-height:35.756px;color:#000;">60918452</div>
<div class="t" style="left:2553.00px;top:1587.92px;font-size:35.756px;line-height:35.756px;color:#000;">62679765</div>
<div class="t" style="left:2731.00px;top:1587.92px;font-size:35.756px;line-height:35.756px;color:#000;">64232486</div>
<div class="t" style="left:2909.00px;top:1587.92px;font-size:35.756px;line-height:35.756px;color:#000;">65531635</div>
<div class="t" style="left:3087.00px;top:1587.92px;font-size:35.756px;line-height:35.756px;color:#000;">66625706</div>
<div class="t" style="left:3265.00px;top:1587.92px;font-size:35.756px;line-height:35.756px;color:#000;">67637541</div>
<div class="a" style="left:1505.00px;top:99.00px;width:484.00px;height:165.00px;background:#fff;box-sizing:border-box;border:2px solid #d6d4d2;"></div>
<div class="a" style="left:1947.50px;top:99.00px;width:41.50px;height:56.00px;background:#f3f2f1;box-sizing:border-box;border:2px solid #d6d4d2;"></div>
<div class="a" style="left:1947.50px;top:157.00px;width:41.50px;height:51.00px;background:#f3f2f1;box-sizing:border-box;border:2px solid #d6d4d2;"></div>
<div class="a" style="left:1947.50px;top:210.00px;width:41.50px;height:54.00px;background:#f3f2f1;box-sizing:border-box;border:2px solid #d6d4d2;"></div>
<div class="t" style="left:45.16px;top:21.74px;font-size:37.500px;line-height:37.500px;color:#444444;transform:scaleX(0.9464);">File</div>
<div class="t" style="left:180.88px;top:21.74px;font-size:37.500px;line-height:37.500px;color:#444444;transform:scaleX(1.0417);">Home</div>
<div class="t" style="left:345.97px;top:21.74px;font-size:37.500px;line-height:37.500px;color:#444444;transform:scaleX(1.0110);">Insert</div>
<div class="t" style="left:503.04px;top:21.74px;font-size:37.500px;line-height:37.500px;color:#444444;transform:scaleX(0.9856);">Page Layout</div>
<div class="t" style="left:771.98px;top:21.74px;font-size:37.500px;line-height:37.500px;color:#444444;transform:scaleX(1.0066);">Formulas</div>
<div class="t" style="left:988.44px;top:21.74px;font-size:37.500px;line-height:37.500px;color:#3a3a3a;-webkit-text-stroke:0.90px #3a3a3a;transform:scaleX(1.0197);">Data</div>
<div class="t" style="left:1131.15px;top:21.74px;font-size:37.500px;line-height:37.500px;color:#444444;transform:scaleX(0.9500);">Review</div>
<div class="t" style="left:1314.00px;top:21.74px;font-size:37.500px;line-height:37.500px;color:#444444;transform:scaleX(0.9634);">View</div>
<div class="t" style="left:1453.96px;top:21.74px;font-size:37.500px;line-height:37.500px;color:#444444;transform:scaleX(1.0119);">Developer</div>
<div class="t" style="left:1687.42px;top:21.74px;font-size:37.500px;line-height:37.500px;color:#444444;transform:scaleX(1.0274);">Help</div>
<div class="a" style="left:990.00px;top:69.00px;width:82.00px;height:8.50px;background:#1e6e42;"></div>
<div class="a" style="left:895.00px;top:94.00px;width:2.00px;height:242.00px;background:#c8c6c4;"></div>
<div class="a" style="left:1477.00px;top:94.00px;width:2.00px;height:242.00px;background:#c8c6c4;"></div>
<div class="a" style="left:2018.50px;top:94.00px;width:2.00px;height:242.00px;background:#c8c6c4;"></div>
<div class="a" style="left:2610.00px;top:94.00px;width:2.00px;height:242.00px;background:#c8c6c4;"></div>
<div class="a" style="left:2961.00px;top:94.00px;width:2.00px;height:242.00px;background:#c8c6c4;"></div>
<div class="a" style="left:2232.00px;top:251.00px;width:2.00px;height:21.00px;background:#d8d6d4;"></div>
<div class="t" style="left:305.00px;top:310.88px;font-size:29.070px;line-height:29.070px;color:#444444;">Get &amp; Transform Data</div>
<div class="t" style="left:1036.60px;top:310.88px;font-size:29.070px;line-height:29.070px;color:#444444;transform:scaleX(0.9980);">Queries &amp; Connections</div>
<div class="t" style="left:1676.05px;top:310.88px;font-size:29.070px;line-height:29.070px;color:#444444;transform:scaleX(0.9726);">Data Types</div>
<div class="t" style="left:2235.98px;top:310.88px;font-size:29.070px;line-height:29.070px;color:#444444;transform:scaleX(1.0178);">Sort &amp; Filter</div>
<div class="t" style="left:2715.01px;top:310.88px;font-size:29.070px;line-height:29.070px;color:#444444;transform:scaleX(0.9928);">Data Tools</div>
<div class="t" style="left:3076.04px;top:310.88px;font-size:29.070px;line-height:29.070px;color:#444444;transform:scaleX(0.9820);">Forecast</div>
<div class="t" style="left:52.56px;top:198.31px;font-size:32.703px;line-height:32.703px;color:#444444;transform:scaleX(0.9706);">Get</div>
<div class="t" style="left:29.02px;top:242.81px;font-size:32.703px;line-height:32.703px;color:#444444;transform:scaleX(0.9924);">Data</div>
<div class="t" style="left:922.10px;top:198.31px;font-size:32.703px;line-height:32.703px;color:#444444;transform:scaleX(0.9682);">Refresh</div>
<div class="t" style="left:944.00px;top:242.81px;font-size:32.703px;line-height:32.703px;color:#444444;transform:scaleX(1.1471);">All</div>
<div class="t" style="left:1570.06px;top:209.81px;font-size:32.703px;line-height:32.703px;color:#444444;transform:scaleX(0.9684);">Stocks</div>
<div class="t" style="left:1758.56px;top:209.81px;font-size:32.703px;line-height:32.703px;color:#444444;transform:scaleX(0.9677);">Currencies</div>
<div class="t" style="left:2130.97px;top:198.31px;font-size:32.703px;line-height:32.703px;color:#444444;transform:scaleX(1.0172);">Sort</div>
<div class="t" style="left:2263.91px;top:198.31px;font-size:32.703px;line-height:32.703px;color:#444444;transform:scaleX(1.0290);">Filter</div>
<div class="t" style="left:2651.48px;top:198.31px;font-size:32.703px;line-height:32.703px;color:#444444;transform:scaleX(1.0153);">Text to</div>
<div class="t" style="left:2638.02px;top:242.81px;font-size:32.703px;line-height:32.703px;color:#444444;transform:scaleX(0.9921);">Columns</div>
<div class="t" style="left:3011.00px;top:198.31px;font-size:32.703px;line-height:32.703px;color:#444444;transform:scaleX(1.0472);">What-If</div>
<div class="t" style="left:2991.00px;top:242.81px;font-size:32.703px;line-height:32.703px;color:#444444;transform:scaleX(0.9669);">Analysis</div>
<div class="t" style="left:3149.10px;top:198.31px;font-size:32.703px;line-height:32.703px;color:#444444;transform:scaleX(0.9677);">Forecast</div>
<div class="t" style="left:3170.07px;top:242.81px;font-size:32.703px;line-height:32.703px;color:#444444;transform:scaleX(0.9639);">Sheet</div>
<div class="t" style="left:199.19px;top:104.19px;font-size:33.430px;line-height:33.430px;color:#444444;transform:scaleX(0.9383);">From Text/CSV</div>
<div class="t" style="left:199.08px;top:169.19px;font-size:33.430px;line-height:33.430px;color:#444444;transform:scaleX(0.9737);">From Web</div>
<div class="t" style="left:199.08px;top:234.19px;font-size:33.430px;line-height:33.430px;color:#444444;transform:scaleX(0.9745);">From Table/Range</div>
<div class="t" style="left:550.17px;top:104.19px;font-size:33.430px;line-height:33.430px;color:#444444;transform:scaleX(0.9444);">Recent Sources</div>
<div class="t" style="left:550.07px;top:169.19px;font-size:33.430px;line-height:33.430px;color:#444444;transform:scaleX(0.9756);">Existing Connections</div>
<div class="t" style="left:1101.04px;top:108.69px;font-size:33.430px;line-height:33.430px;color:#444444;transform:scaleX(0.9795);">Queries &amp; Connections</div>
<div class="t" style="left:1100.04px;top:175.69px;font-size:33.430px;line-height:33.430px;color:#a6a6a6;transform:scaleX(0.9865);">Properties</div>
<div class="t" style="left:1100.13px;top:242.19px;font-size:33.430px;line-height:33.430px;color:#a6a6a6;transform:scaleX(0.9574);">Edit Links</div>
<div class="t" style="left:2421.08px;top:108.69px;font-size:33.430px;line-height:33.430px;color:#a6a6a6;transform:scaleX(0.9615);">Clear</div>
<div class="t" style="left:2420.00px;top:175.69px;font-size:33.430px;line-height:33.430px;color:#a6a6a6;">Reapply</div>
<div class="t" style="left:2423.00px;top:242.19px;font-size:33.430px;line-height:33.430px;color:#444444;transform:scaleX(0.9864);">Advanced</div>
<svg width="3300" height="347" style="left:0;top:0"><path d="M50.5 113 L50.5 170 Q50.5 180 80 181" fill="#fafafa" stroke="#505050" stroke-width="2.6"/><path d="M50.5 113 L50.5 170 Q52 179 80 180 L106.5 180 L106.5 113 Z" fill="#fafafa"/><path d="M50.5 113 L50.5 170 Q52 179 80 180" fill="none" stroke="#505050" stroke-width="2.6"/><path d="M106.5 113 L106.5 142" fill="none" stroke="#505050" stroke-width="2.6"/><ellipse cx="78.5" cy="113" rx="28" ry="9.5" fill="#fafafa" stroke="#505050" stroke-width="2.6"/><rect x="82" y="144" width="40.5" height="40.5" fill="#fafafa" stroke="#444" stroke-width="2.6"/><rect x="82" y="144" width="40.5" height="8" fill="#b4b4b4"/><path d="M82 152.5 L122.5 152.5" stroke="#444" stroke-width="2.6"/><path d="M82 164 L122.5 164 M82 175 L122.5 175 M95.5 153 L95.5 184.5 M109.5 153 L109.5 184.5" stroke="#808080" stroke-width="2.4"/><path d="M153.5 99.5 L172.0 99.5 L185.0 112.5 L185.0 141.0 L153.5 141.0 Z" fill="#fafafa" stroke="#505050" stroke-width="2.6" stroke-linejoin="miter"/><path d="M172.0 99.5 L172.0 112.5 L185.0 112.5" fill="none" stroke="#505050" stroke-width="2.6"/><rect x="172.5" y="119" width="17" height="22" fill="#f0f0f0" stroke="#505050" stroke-width="2.6"/><path d="M176 126 L186 126 M176 131 L186 131 M176 136 L186 136" stroke="#505050" stroke-width="2"/><path d="M153.5 164.5 L172.0 164.5 L185.0 177.5 L185.0 205.0 L153.5 205.0 Z" fill="#fafafa" stroke="#505050" stroke-width="2.6" stroke-linejoin="miter"/><path d="M172.0 164.5 L172.0 177.5 L185.0 177.5" fill="none" stroke="#505050" stroke-width="2.6"/><circle cx="179" cy="194" r="12.5" fill="#1e8be0"/><path d="M167 194 L191 194 M179 182 L179 206 M170 188 L188 188 M170 200 L188 200" stroke="#fff" stroke-width="1.8"/><ellipse cx="179" cy="194" rx="6" ry="12" fill="none" stroke="#fff" stroke-width="1.8"/><rect x="149" y="229" width="37.5" height="38.5" fill="#fafafa" stroke="#555" stroke-width="2.6"/><path d="M149 241 L186.5 241 M149 251 L186.5 251 M149 260 L186.5 260 M167.5 241 L167.5 267" stroke="#555" stroke-width="2.5"/><path d="M153 231.5 L161 231.5 L157 236 Z M174 231.5 L182 231.5 L178 236 Z" fill="#1e8be0"/><path d="M505.5 99.5 L523.0 99.5 L536.0 112.5 L536.0 141.0 L505.5 141.0 Z" fill="#fafafa" stroke="#505050" stroke-width="2.6" stroke-linejoin="miter"/><path d="M523.0 99.5 L523.0 112.5 L536.0 112.5" fill="none" stroke="#505050" stroke-width="2.6"/><circle cx="530" cy="129" r="11" fill="#fff" stroke="#1e8be0" stroke-width="2.6"/><path d="M530 122 L530 129.5 L536 129.5" fill="none" stroke="#1e8be0" stroke-width="2.2"/><path d="M505.5 164.5 L523.0 164.5 L536.0 177.5 L536.0 205.0 L505.5 205.0 Z" fill="#fafafa" stroke="#505050" stroke-width="2.6" stroke-linejoin="miter"/><path d="M523.0 164.5 L523.0 177.5 L536.0 177.5" fill="none" stroke="#505050" stroke-width="2.6"/><path d="M522.5 184 L522.5 201 Q522.5 205 532 205 Q541 205 541 201 L541 184" fill="#fff" stroke="#d9730d" stroke-width="2.6"/><ellipse cx="531.75" cy="184" rx="9.25" ry="4" fill="#fff" stroke="#d9730d" stroke-width="2.6"/><path d="M950 177 L950 104.5 L987 104.5" fill="none" stroke="#505050" stroke-width="2.6"/><path d="M959.5 113.5 L987.0 113.5 L1008.0 134.5 L1008.0 178.5 L959.5 178.5 Z" fill="#fafafa" stroke="#505050" stroke-width="2.6" stroke-linejoin="miter"/><path d="M987.0 113.5 L987.0 134.5 L1008.0 134.5" fill="none" stroke="#505050" stroke-width="2.6"/><circle cx="1002.75" cy="165.75" r="20" fill="#fafafa"/><path d="M985.5 160 A18 18 0 0 1 1018 155" fill="none" stroke="#2ea44f" stroke-width="3.5"/><path d="M1020 148 L1019 158 L1010 156" fill="none" stroke="#2ea44f" stroke-width="3.5"/><path d="M1020 171 A18 18 0 0 1 987.5 177" fill="none" stroke="#2ea44f" stroke-width="3.5"/><path d="M985.5 184 L986.5 174 L995.5 176" fill="none" stroke="#2ea44f" stroke-width="3.5"/><rect x="1049.5" y="106.5" width="41.5" height="36" fill="#f7f7f7" stroke="#444" stroke-width="2.6"/><rect x="1049.5" y="106.5" width="41.5" height="6" fill="#8a8a8a"/><path d="M1076.5 113 L1076.5 141" stroke="#1e8be0" stroke-width="2.6"/><path d="M1082.5 120 L1088.5 120 M1082.5 126.5 L1088.5 126.5 M1082.5 133 L1088.5 133" stroke="#1e8be0" stroke-width="2.5"/><rect x="1054.5" y="171" width="32" height="40.5" fill="#f5f5f5" stroke="#b9b9b9" stroke-width="2.6"/><rect x="1059.5" y="181" width="6" height="6" fill="#b9b9b9"/><rect x="1059.5" y="194" width="6" height="6" fill="#b9b9b9"/><path d="M1072 184 L1080 184 M1072 197 L1080 197" stroke="#b9b9b9" stroke-width="2.5"/><path d="M1054.5 237.5 L1074.0 237.5 L1087.0 250.5 L1087.0 278.0 L1054.5 278.0 Z" fill="#fafafa" stroke="#b9b9b9" stroke-width="2.6" stroke-linejoin="miter"/><path d="M1074.0 237.5 L1074.0 250.5 L1087.0 250.5" fill="none" stroke="#b9b9b9" stroke-width="2.6"/><ellipse cx="1077" cy="266" rx="12" ry="6.5" fill="#f3f2f1" stroke="#b9b9b9" stroke-width="2.5"/><ellipse cx="1080" cy="272" rx="10" ry="5.5" fill="none" stroke="#b9b9b9" stroke-width="2.5"/><path d="M1579.5 147 L1616.25 126.5 L1653 147 Z" fill="#fafafa" stroke="#444" stroke-width="2.6" stroke-linejoin="round"/><path d="M1579.5 147.5 L1653 147.5" stroke="#444" stroke-width="4"/><path d="M1588.5 149 L1588.5 180 M1602.5 149 L1602.5 180 M1616.25 149 L1616.25 180 M1630.5 149 L1630.5 180 M1644 149 L1644 180" stroke="#444" stroke-width="2.6"/><path d="M1585 181.5 L1648 181.5 L1653 189 L1580 189 Z" fill="#fafafa" stroke="#444" stroke-width="2.6" stroke-linejoin="round"/><rect x="1798.5" y="134.5" width="74" height="46" fill="#fafafa" stroke="#444" stroke-width="2.6"/><path d="M1813 137.5 L1806 137.5 L1806 175.5 L1813 175.5 M1860.5 139 L1867.5 139 L1867.5 152" fill="none" stroke="#444" stroke-width="2.6"/><ellipse cx="1833" cy="157.5" rx="10.5" ry="18" fill="none" stroke="#444" stroke-width="2.6"/><path d="M1842 167 L1842 196 Q1842 201.5 1860.5 201.5 Q1879 201.5 1879 196 L1879 167" fill="#fafafa" stroke="#444" stroke-width="2.6"/><ellipse cx="1860.5" cy="167" rx="18.5" ry="5.5" fill="#fafafa" stroke="#444" stroke-width="2.6"/><path d="M1842 177 Q1842 182.5 1860.5 182.5 Q1879 182.5 1879 177 M1842 187 Q1842 192.5 1860.5 192.5 Q1879 192.5 1879 187" fill="none" stroke="#444" stroke-width="2.6"/><path d="M1960 130 L1968 122.5 L1976 130" fill="none" stroke="#b0b0b0" stroke-width="2.5"/><path d="M1960 180.5 L1968 188 L1976 180.5" fill="none" stroke="#333" stroke-width="2.5"/><path d="M1959 225.5 L1977 225.5" stroke="#333" stroke-width="2.5"/><path d="M1960 231.5 L1968 239 L1976 231.5" fill="none" stroke="#333" stroke-width="2.5"/><path d="M2086.5 126 L2086.5 167 M2079.5 160 L2086.5 167.5 L2093.5 160" fill="none" stroke="#333" stroke-width="2.5"/><path d="M2086.5 214 L2086.5 256 M2079.5 249 L2086.5 256.5 L2093.5 249" fill="none" stroke="#333" stroke-width="2.5"/><rect x="2125.5" y="104.5" width="75" height="75.5" fill="#fafafa" stroke="#505050" stroke-width="2.6"/><rect x="2127" y="106" width="72" height="10" fill="#c4c4c4"/><path d="M2125.5 117 L2200.5 117" stroke="#505050" stroke-width="2.5"/><path d="M2161 117 L2161 180" stroke="#505050" stroke-width="2.5"/><path d="M2266 104.5 L2337 104.5 L2337 114 L2310.5 147.5 L2310.5 179 L2293.5 179 L2293.5 147.5 L2266 114 Z" fill="#fafafa" stroke="#505050" stroke-width="3.5" stroke-linejoin="miter"/><path d="M2371.0 104.0 L2413.0 104.0 L2413.0 108.5 L2395.5 126.5 L2388.0 126.5 L2371.0 108.5 L2371.0 104.0 Z" fill="#f0f0f0" stroke="#b9b9b9" stroke-width="2.6" stroke-linejoin="miter"/><path d="M2388 126 L2388 145" stroke="#b9b9b9" stroke-width="2.6"/><path d="M2396 128 L2413.5 145.5 M2413.5 128 L2396 145.5" stroke="#b9b9b9" stroke-width="2.5"/><path d="M2371.0 171.0 L2413.0 171.0 L2413.0 175.5 L2395.5 193.5 L2388.0 193.5 L2371.0 175.5 L2371.0 171.0 Z" fill="#f0f0f0" stroke="#b9b9b9" stroke-width="2.6" stroke-linejoin="miter"/><path d="M2388 193 L2388 212" stroke="#b9b9b9" stroke-width="2.6"/><circle cx="2403" cy="201" r="9" fill="none" stroke="#b9b9b9" stroke-width="2.5"/><path d="M2371.0 238.0 L2413.0 238.0 L2413.0 242.5 L2395.5 260.5 L2388.0 260.5 L2371.0 242.5 L2371.0 238.0 Z" fill="#f0f0f0" stroke="#404040" stroke-width="2.6" stroke-linejoin="miter"/><path d="M2388 260 L2388 279" stroke="#404040" stroke-width="2.6"/><circle cx="2403" cy="268" r="9" fill="none" stroke="#1e8be0" stroke-width="4" stroke-dasharray="3.5 3.56"/><circle cx="2403" cy="268" r="5.5" fill="none" stroke="#1e8be0" stroke-width="2.6"/><path d="M2670.5 116 L2703.5 116 M2670.5 127 L2703.5 127 M2678.5 138 L2703.5 138" stroke="#505050" stroke-width="3.2"/><rect x="2716.5" y="104.5" width="25.5" height="75" fill="#fafafa" stroke="#444" stroke-width="2.6"/><path d="M2716.5 129.5 L2742 129.5 M2716.5 154.5 L2742 154.5" stroke="#444" stroke-width="2.6"/><path d="M2723 116 L2734.5 116 M2723 140.5 L2734.5 140.5 M2723 166 L2734.5 166" stroke="#1e8be0" stroke-width="2.6"/><path d="M2673 139 A16.5 16.5 0 0 0 2673.8 171 L2694 171" fill="none" stroke="#1e8be0" stroke-width="3.5"/><path d="M2680 156.5 L2695 171.5 L2680 186" fill="none" stroke="#1e8be0" stroke-width="3.5"/><path d="M2801 101.5 L2824 101.5 L2824 138 L2783.5 138 L2783.5 114" fill="#efefef" stroke="#b9b9b9" stroke-width="2.6"/><path d="M2783.5 124 L2824 124 M2783.5 114 L2824 114 M2794 114 L2794 138 M2812.5 101.5 L2812.5 138" stroke="#b9b9b9" stroke-width="2.5"/><path d="M2790 98 L2801 98 L2795 108 L2801 108 L2783 126 L2788 112 L2782.5 112 Z" fill="#dcdcdc" stroke="#b9b9b9" stroke-width="2.5" stroke-linejoin="round"/><rect x="2788" y="164" width="33.5" height="12" fill="#86bff0" stroke="#1a6fc9" stroke-width="2.6"/><path d="M2788 176 L2788 190 M2821.5 176 L2821.5 186" stroke="#444" stroke-width="2.6"/><path d="M2788 190 L2803 190 L2808.5 197.5 L2803 205 L2788 205 Z" fill="#86bff0" stroke="#1a6fc9" stroke-width="2.6" stroke-linejoin="miter"/><path d="M2807 187 L2826 206 M2826 187 L2807 206" stroke="#e8413c" stroke-width="2.5"/><path d="M2797 232 L2782.5 232 L2782.5 241 L2802 241 M2801 252 L2782.5 252 L2782.5 268 L2797 268" fill="none" stroke="#444" stroke-width="2.6"/><path d="M2806 239 L2812 245 L2825 230" fill="none" stroke="#2ea44f" stroke-width="2.6"/><circle cx="2815" cy="261" r="8.5" fill="#fff" stroke="#e8413c" stroke-width="2.6"/><path d="M2809 255 L2821 267" stroke="#e8413c" stroke-width="2.6"/><path d="M2847 247 L2854 254 L2861 247" fill="none" stroke="#333" stroke-width="2.5"/><path d="M2906.5 111 L2906.5 101.5 L2889.5 101.5 L2889.5 136 L2906.5 136 L2906.5 127" fill="none" stroke="#333" stroke-width="2.6"/><path d="M2893 112.5 L2903 112.5 M2893 124.5 L2903 124.5" stroke="#888" stroke-width="2"/><path d="M2891 118.5 L2909 118.5 M2903.5 112.5 L2909.5 118.5 L2903.5 124.5" fill="none" stroke="#1e8be0" stroke-width="2.6"/><rect x="2914.5" y="112.5" width="17" height="12.5" fill="#fff" stroke="#1e8be0" stroke-width="2.6"/><path d="M2919 118.7 L2927 118.7" stroke="#333" stroke-width="2"/><rect x="2890.0" y="175.5" width="16.0" height="15.5" fill="#e6e6e6" stroke="#b9b9b9" stroke-width="2.6"/><path d="M2894.0 180.8 L2902.0 180.8 M2894.0 185.8 L2902.0 185.8" stroke="#b9b9b9" stroke-width="1.8"/><rect x="2914.5" y="164.0" width="16.5" height="16.0" fill="#e6e6e6" stroke="#b9b9b9" stroke-width="2.6"/><path d="M2918.5 169.5 L2927.0 169.5 M2918.5 174.5 L2927.0 174.5" stroke="#b9b9b9" stroke-width="1.8"/><rect x="2914.5" y="189.0" width="16.5" height="16.0" fill="#e6e6e6" stroke="#b9b9b9" stroke-width="2.6"/><path d="M2918.5 194.5 L2927.0 194.5 M2918.5 199.5 L2927.0 199.5" stroke="#b9b9b9" stroke-width="1.8"/><path d="M2906 183 Q2911 183 2911 176 Q2911 172 2914.5 172 M2911 183 Q2911 197 2914.5 197" fill="none" stroke="#b9b9b9" stroke-width="2.5"/><path d="M2889 238 Q2889 229 2900 228 Q2920 226 2931 236 L2932 264 Q2920 271 2902 270 Q2889 270 2889 262 Z" fill="#6cb52d"/><path d="M2895 242 L2895 266 M2899 238 L2925 238" stroke="#b9e08f" stroke-width="1.6" fill="none"/><rect x="2910.0" y="240.5" width="5" height="5" fill="#fff"/><rect x="2910.0" y="248.5" width="5" height="5" fill="#fff"/><rect x="2910.0" y="256.5" width="5" height="5" fill="#fff"/><rect x="2910.0" y="263.5" width="5" height="5" fill="#fff"/><rect x="2917.5" y="240.5" width="5" height="5" fill="#fff"/><rect x="2917.5" y="248.5" width="5" height="5" fill="#fff"/><rect x="2917.5" y="256.5" width="5" height="5" fill="#fff"/><rect x="2917.5" y="263.5" width="5" height="5" fill="#fff"/><rect x="2924.5" y="240.5" width="5" height="5" fill="#fff"/><rect x="2924.5" y="248.5" width="5" height="5" fill="#fff"/><rect x="2924.5" y="256.5" width="5" height="5" fill="#fff"/><rect x="2924.5" y="263.5" width="5" height="5" fill="#fff"/><path d="M2900 262 L2904 262 L2906 250 M2903 253 L2906 249 L2909 253" fill="none" stroke="#fff" stroke-width="2"/><rect x="3028" y="112.5" width="73.5" height="60" fill="#fafafa" stroke="#444" stroke-width="2.6"/><path d="M3053 132.5 L3101.5 132.5 M3028 152 L3101.5 152 M3078 112.5 L3078 172.5" stroke="#555" stroke-width="2.6"/><rect x="3028.5" y="113" width="25" height="19.5" fill="#86bff0" stroke="#1464c0" stroke-width="3.5"/><rect x="3028.5" y="152" width="25" height="20" fill="#86bff0" stroke="#1464c0" stroke-width="3.5"/><path d="M3028.5 132.5 L3028.5 152" stroke="#444" stroke-width="2.6"/><rect x="3083" y="138" width="30" height="48" fill="#f3f2f1"/><path d="M3086.5 152 Q3087 140.5 3097.5 140.5 Q3108.5 140.5 3108.5 151 Q3108.5 158 3101 162.5 Q3096.5 165.5 3096.5 173" fill="none" stroke="#1e8be0" stroke-width="3.5"/><circle cx="3096.5" cy="184" r="2.5" fill="#1e8be0"/><path d="M3175.5 108.5 L3250.5 108.5 L3250.5 163.5 L3199 163.5 L3190 173.5 L3175.5 173.5 Z" fill="#fafafa" stroke="#444" stroke-width="2.6"/><path d="M3175.5 127 L3250.5 127 M3175.5 146.5 L3250.5 146.5 M3175.5 163.5 L3199 163.5 M3200.5 108.5 L3200.5 163.5 M3225.5 108.5 L3225.5 163.5" stroke="#555" stroke-width="2.6"/><path d="M3175.5 155 L3188 141 L3196.5 152 L3210 137.5 L3215.5 130 L3224.5 136.5 L3245 116" fill="none" stroke="#fafafa" stroke-width="8"/><path d="M3175.5 155 L3188 141 L3196.5 152 L3210 137.5" fill="none" stroke="#1e8be0" stroke-width="2.6"/><path d="M3210 137.5 L3215.5 130 L3224.5 136.5 L3245 116 M3233.5 116 L3245.5 116 L3245.5 128" fill="none" stroke="#e8413c" stroke-width="2.6"/><path d="M112.0 253.0 L119.0 260.5 L126.0 253.0" fill="none" stroke="#444" stroke-width="2.5"/><path d="M995.5 252.5 L1002.5 260.0 L1009.5 252.5" fill="none" stroke="#444" stroke-width="2.5"/><path d="M3120.5 252.5 L3127.5 260.0 L3134.5 252.5" fill="none" stroke="#444" stroke-width="2.5"/></svg>
<div class="t" style="left:2052.00px;top:120.50px;font-size:28.343px;line-height:28.343px;color:#1e8be0;-webkit-text-stroke:0.90px #1e8be0;">A</div>
<div class="t" style="left:2050.71px;top:146.85px;font-size:26.163px;line-height:26.163px;color:#333;-webkit-text-stroke:0.90px #333;transform:scaleX(1.2857);">Z</div>
<div class="t" style="left:2050.71px;top:209.46px;font-size:25.436px;line-height:25.436px;color:#333;-webkit-text-stroke:0.90px #333;transform:scaleX(1.2857);">Z</div>
<div class="t" style="left:2052.00px;top:234.11px;font-size:27.616px;line-height:27.616px;color:#1e8be0;-webkit-text-stroke:0.90px #1e8be0;transform:scaleX(1.0556);">A</div>
<div class="t" style="left:2133.88px;top:117.31px;font-size:32.703px;line-height:32.703px;color:#444;transform:scaleX(0.9222);">Z</div>
<div class="t" style="left:2132.30px;top:145.31px;font-size:32.703px;line-height:32.703px;color:#1e8be0;transform:scaleX(0.9091);">A</div>
<div class="t" style="left:2171.40px;top:117.31px;font-size:32.703px;line-height:32.703px;color:#1e8be0;transform:scaleX(0.8682);">A</div>
<div class="t" style="left:2170.85px;top:145.31px;font-size:32.703px;line-height:32.703px;color:#444;transform:scaleX(0.8500);">Z</div>
<div class="a" style="left:1319.50px;top:665.00px;width:1632.50px;height:746.00px;background:#f0f0f0;box-shadow:0 4px 22px 6px rgba(0,0,0,0.28);"></div>
<div class="a" style="left:1319.50px;top:665.00px;width:1632.50px;height:746.00px;box-sizing:border-box;border:2px solid #6a6a6a;"></div>
<div class="a" style="left:1321.50px;top:667.00px;width:1628.50px;height:82.50px;background:#ffffff;"></div>
<div class="t" style="left:1340.97px;top:692.81px;font-size:32.703px;line-height:32.703px;color:#000;transform:scaleX(1.0172);">Sort</div>
<div class="t" style="left:2749.47px;top:689.11px;font-size:37.064px;line-height:37.064px;color:#222;transform:scaleX(0.7647);">?</div>
<svg width="40" height="40" style="left:2864px;top:688px"><path d="M6 6.5 L33.5 33 M33.5 6.5 L6 33" stroke="#111" stroke-width="2.3" fill="none"/></svg>
<div class="a" style="left:1340.00px;top:772.50px;width:224.00px;height:65.00px;background:#e1e1e1;box-sizing:border-box;border:2px solid #adadad;"></div>
<div class="a" style="left:1574.00px;top:772.50px;width:252.00px;height:65.00px;background:#e1e1e1;box-sizing:border-box;border:2px solid #adadad;"></div>
<div class="a" style="left:1836.00px;top:772.50px;width:237.00px;height:65.00px;background:#e1e1e1;box-sizing:border-box;border:2px solid #adadad;"></div>
<div class="a" style="left:2087.50px;top:772.50px;width:66.50px;height:65.00px;background:#e1e1e1;box-sizing:border-box;border:2px solid #adadad;"></div>
<div class="a" style="left:2163.00px;top:772.50px;width:66.00px;height:65.00px;background:#e1e1e1;box-sizing:border-box;border:2px solid #adadad;"></div>
<div class="a" style="left:2239.00px;top:772.50px;width:170.50px;height:65.00px;background:#e1e1e1;box-sizing:border-box;border:2px solid #adadad;"></div>
<div class="a" style="left:2078.50px;top:770.00px;width:2.00px;height:70.00px;background:#111;"></div>
<svg width="3300" height="1617" style="left:0;top:0"><path d="M1383 783 L1383 825 M1362 804 L1404 804" stroke="#3b9a3b" stroke-width="3" fill="none"/><path d="M1601.5 788.5 L1634 821.5 M1634 788.5 L1601.5 821.5" stroke="#e8413c" stroke-width="3" fill="none"/><path d="M1859.5 784.5 L1876 784.5 L1880 789 L1880 792 M1859.5 784.5 L1859.5 819 L1871 819" stroke="#555" stroke-width="2.5" fill="none"/><path d="M1875.5 791.5 L1893 791.5 L1902 800.5 L1902 827 L1875.5 827 Z" fill="#fafafa" stroke="#555" stroke-width="2.5"/><path d="M1893 791.5 L1893 800.5 L1902 800.5" fill="none" stroke="#555" stroke-width="2"/><path d="M1881 812 L1896 812 M1881 818 L1896 818" stroke="#555" stroke-width="2"/><path d="M2107 810 L2120.5 796.5 L2134 810" stroke="#b4b4b4" stroke-width="2.5" fill="none"/><path d="M2183 800 L2196 813 L2209 800" stroke="#b4b4b4" stroke-width="2.5" fill="none"/></svg>
<div class="t" style="left:1413.00px;top:790.15px;font-size:30.523px;line-height:30.523px;color:#000;transform:scaleX(0.9440);">Add Level</div>
<div class="t" style="left:1645.14px;top:790.15px;font-size:30.523px;line-height:30.523px;color:#000;transform:scaleX(0.9277);">Delete Level</div>
<div class="t" style="left:1909.07px;top:790.15px;font-size:30.523px;line-height:30.523px;color:#000;transform:scaleX(0.9267);">Copy Level</div>
<div class="t" style="left:2263.05px;top:790.15px;font-size:30.523px;line-height:30.523px;color:#000;transform:scaleX(0.9528);">Options...</div>
<div class="a" style="left:1413.00px;top:819.50px;width:17.00px;height:2.30px;background:#000;"></div>
<div class="a" style="left:1647.00px;top:819.50px;width:19.00px;height:2.30px;background:#000;"></div>
<div class="a" style="left:1910.00px;top:819.50px;width:16.00px;height:2.30px;background:#000;"></div>
<div class="a" style="left:2263.00px;top:819.50px;width:21.50px;height:2.30px;background:#000;"></div>
<div class="a" style="left:2824.00px;top:819.50px;width:15.00px;height:2.30px;background:#000;"></div>
<div class="a" style="left:2601.00px;top:785.50px;width:36.00px;height:35.00px;background:#fff;box-sizing:border-box;border:2px solid #333;"></div>
<svg width="40" height="40" style="left:2601px;top:785.5px"><path d="M7 18 L14.5 25.5 L29 10" stroke="#333" stroke-width="2.5" fill="none"/></svg>
<div class="t" style="left:2653.06px;top:789.65px;font-size:30.523px;line-height:30.523px;color:#000;transform:scaleX(0.9681);">My data has headers</div>
<div class="a" style="left:1337.50px;top:849.00px;width:1598.50px;height:466.00px;background:#fff;box-sizing:border-box;border:2px solid #828790;"></div>
<div class="a" style="left:1878.00px;top:855.00px;width:2.00px;height:57.00px;background:#e8e8e8;"></div>
<div class="a" style="left:2416.00px;top:855.00px;width:2.00px;height:57.00px;background:#e8e8e8;"></div>
<div class="a" style="left:2928.00px;top:855.00px;width:2.00px;height:445.00px;background:#ececec;"></div>
<div class="t" style="left:1353.49px;top:869.00px;font-size:28.343px;line-height:28.343px;color:#000;transform:scaleX(1.0053);">Column</div>
<div class="t" style="left:1890.96px;top:869.00px;font-size:28.343px;line-height:28.343px;color:#000;transform:scaleX(1.0368);">Sort On</div>
<div class="t" style="left:2429.92px;top:869.00px;font-size:28.343px;line-height:28.343px;color:#000;transform:scaleX(1.0775);">Order</div>
<div class="a" style="left:1342.00px;top:912.00px;width:1586.00px;height:60.00px;background:#dadbdf;"></div>
<div class="t" style="left:1346.49px;top:920.38px;font-size:29.070px;line-height:29.070px;color:#000;transform:scaleX(1.0055);">Sort by</div>
<div class="a" style="left:1475.50px;top:915.00px;width:377.50px;height:54.00px;background:#fff;box-sizing:border-box;border:2px solid #b9b9b9;"></div>
<div class="a" style="left:1803.00px;top:919.50px;width:46.00px;height:45.50px;background:#e1e1e1;box-sizing:border-box;border:2px solid #c5c5c5;"></div>
<svg width="40" height="30" style="left:1806.0px;top:930px"><path d="M10 7 L20 17 L30 7" stroke="#6a6a6a" stroke-width="2.2" fill="none"/></svg>
<div class="a" style="left:1883.00px;top:915.00px;width:508.00px;height:54.00px;background:#fff;box-sizing:border-box;border:2px solid #b9b9b9;"></div>
<div class="a" style="left:2341.00px;top:919.50px;width:46.50px;height:45.50px;background:#e1e1e1;box-sizing:border-box;border:2px solid #c5c5c5;"></div>
<svg width="40" height="30" style="left:2344.2px;top:930px"><path d="M10 7 L20 17 L30 7" stroke="#6a6a6a" stroke-width="2.2" fill="none"/></svg>
<div class="a" style="left:2421.00px;top:915.00px;width:506.50px;height:54.00px;background:#fff;box-sizing:border-box;border:2px solid #b9b9b9;"></div>
<div class="a" style="left:2878.00px;top:919.50px;width:45.00px;height:45.50px;background:#e1e1e1;box-sizing:border-box;border:2px solid #c5c5c5;"></div>
<svg width="40" height="30" style="left:2880.5px;top:930px"><path d="M10 7 L20 17 L30 7" stroke="#6a6a6a" stroke-width="2.2" fill="none"/></svg>
<div class="a" style="left:1480.50px;top:920.50px;width:320.00px;height:42.50px;background:#99c9ef;box-sizing:border-box;border:2px dotted #2a2a2a;"></div>
<div class="t" style="left:1483.15px;top:927.15px;font-size:30.523px;line-height:30.523px;color:#000;transform:scaleX(0.9272);">(Column A)</div>
<div class="t" style="left:1891.09px;top:927.15px;font-size:30.523px;line-height:30.523px;color:#000;transform:scaleX(0.9079);">Cell Values</div>
<div class="t" style="left:2429.10px;top:927.15px;font-size:30.523px;line-height:30.523px;color:#000;transform:scaleX(0.9486);">Smallest to Largest</div>
<div class="a" style="left:2521.00px;top:1325.50px;width:191.50px;height:62.00px;background:#e1e1e1;box-sizing:border-box;border:4px solid #0078d7;"></div>
<div class="a" style="left:2742.00px;top:1325.50px;width:190.50px;height:62.00px;background:#e1e1e1;box-sizing:border-box;border:2px solid #adadad;"></div>
<div class="t" style="left:2598.01px;top:1344.73px;font-size:26.890px;line-height:26.890px;color:#000;transform:scaleX(0.9865);">OK</div>
<div class="t" style="left:2794.99px;top:1344.73px;font-size:26.890px;line-height:26.890px;color:#000;transform:scaleX(1.0123);">Cancel</div>
<svg width="40" height="40" style="left:2915px;top:1375px"><rect x="26" y="4" width="5" height="5" fill="#bdbdbd"/><rect x="26" y="15" width="5" height="5" fill="#bdbdbd"/><rect x="15" y="15" width="5" height="5" fill="#bdbdbd"/><rect x="26" y="26" width="5" height="5" fill="#bdbdbd"/><rect x="15" y="26" width="5" height="5" fill="#bdbdbd"/><rect x="4" y="26" width="5" height="5" fill="#bdbdbd"/></svg>
<div class="a" style="left:2097.00px;top:81.00px;width:140.50px;height:170.00px;box-sizing:border-box;border:10px solid #c00000;"></div>
<svg width="3300" height="1617" style="left:0;top:0"><path d="M1635.5 1064 L1635.5 1220 Q1635.5 1234.5 1650.5 1234.5 Q1665.5 1234.5 1665.5 1220 L1665.5 1064 L1701.5 1064 L1650.5 978.5 L1599.5 1064 Z" fill="none" stroke="#c00000" stroke-width="10.5" stroke-linejoin="round"/></svg>
</body></html>
